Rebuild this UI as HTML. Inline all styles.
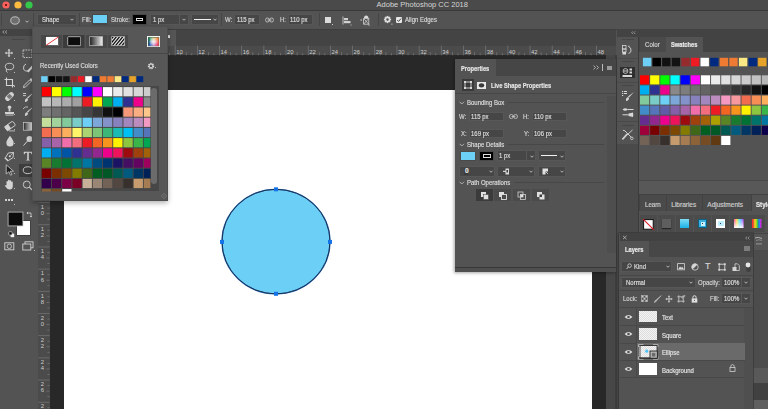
<!DOCTYPE html><html><head><meta charset="utf-8"><style>
html,body{margin:0;padding:0;width:768px;height:409px;overflow:hidden;background:#535353;font-family:"Liberation Sans", sans-serif}
div{position:absolute;box-sizing:border-box}
.t{white-space:nowrap;-webkit-text-stroke:0.18px currentColor}
</style></head><body><div style="left:0px;top:0px;width:768px;height:9.6px;background:#4a4a4a"></div><div style="left:0px;top:9.6px;width:768px;height:1.2px;background:#393939"></div><svg style="position:absolute;left:2.4000000000000004px;top:0.7px;" width="8" height="8" viewBox="0 0 8 8"><circle cx="4" cy="4" r="3.6" fill="#fc615d"/></svg><svg style="position:absolute;left:13.8px;top:0.7px;" width="8" height="8" viewBox="0 0 8 8"><circle cx="4" cy="4" r="3.6" fill="#fdbc40"/></svg><svg style="position:absolute;left:25px;top:0.7px;" width="8" height="8" viewBox="0 0 8 8"><circle cx="4" cy="4" r="3.6" fill="#34c84a"/></svg><svg style="position:absolute;left:4.4px;top:2.7px;" width="4" height="4" viewBox="0 0 4 4"><circle cx="2" cy="2" r="1" fill="#4d0000"/></svg><div class="t" style="left:376.6px;top:-0.28px;line-height:9.75px;font-size:7.5px;color:#d6d6d6;font-weight:normal;-webkit-text-stroke:0">Adobe Photoshop CC 2018</div><div style="left:0px;top:11px;width:768px;height:18px;background:#535353"></div><div style="left:0px;top:28.5px;width:768px;height:1px;background:#3e3e3e"></div><div style="left:1px;top:13px;width:1px;height:13px;background:#464646"></div><div style="left:33px;top:13px;width:1px;height:13px;background:#464646"></div><div style="left:79px;top:13px;width:1px;height:13px;background:#464646"></div><div style="left:221px;top:13px;width:1px;height:13px;background:#464646"></div><div style="left:318.5px;top:13px;width:1px;height:13px;background:#464646"></div><div style="left:377.5px;top:13px;width:1px;height:13px;background:#464646"></div><svg style="position:absolute;left:10px;top:15.5px;" width="10" height="9" viewBox="0 0 10 9"><ellipse cx="5" cy="4.5" rx="4.3" ry="3.7" fill="#6e6e6e" stroke="#d8d8d8" stroke-width="0.8"/></svg><svg style="position:absolute;left:24.5px;top:19.5px;" width="4" height="3" viewBox="0 0 4 3"><polyline points="0.5,0.7 2.0,2.3 3.5,0.7" fill="none" stroke="#cfcfcf" stroke-width="0.8"/></svg><div style="left:38px;top:14.8px;width:38px;height:9px;background:#464646;box-shadow:0 0 0 0.7px #5a5a5a"></div><div class="t" style="left:41.7px;top:15px;line-height:10px;font-size:6.5px;color:#dcdcdc;font-weight:normal;transform:scaleX(0.92);transform-origin:0 0;">Shape</div><svg style="position:absolute;left:69.5px;top:18.2px;" width="4" height="3" viewBox="0 0 4 3"><polyline points="0.5,0.7 2.0,2.3 3.5,0.7" fill="none" stroke="#cfcfcf" stroke-width="0.8"/></svg><div class="t" style="left:82px;top:15px;line-height:10px;font-size:6.5px;color:#d2d2d2;font-weight:normal;transform:scaleX(0.92);transform-origin:0 0;">Fill:</div><div style="left:92px;top:14px;width:16px;height:10.5px;background:#484848"></div><div style="left:93.2px;top:15.1px;width:13.6px;height:8.4px;background:#6ccff6"></div><div class="t" style="left:110.6px;top:15px;line-height:10px;font-size:6.5px;color:#d2d2d2;font-weight:normal;transform:scaleX(0.92);transform-origin:0 0;">Stroke:</div><div style="left:132px;top:14px;width:15px;height:10.5px;background:#484848"></div><div style="left:132.8px;top:15px;width:13.4px;height:8.6px;background:#000"></div><div style="left:135.6px;top:17.6px;width:7.6px;height:3.2px;box-shadow:inset 0 0 0 0.9px #e0e0e0"></div><div style="left:151px;top:14.8px;width:27.8px;height:9px;background:#464646;box-shadow:0 0 0 0.7px #5a5a5a"></div><div class="t" style="left:153px;top:15px;line-height:10px;font-size:6.5px;color:#dcdcdc;font-weight:normal;transform:scaleX(0.92);transform-origin:0 0;">1 px</div><div style="left:180px;top:14.8px;width:8px;height:9px;background:#464646;box-shadow:0 0 0 0.7px #5a5a5a"></div><svg style="position:absolute;left:182px;top:18.2px;" width="4" height="3" viewBox="0 0 4 3"><polyline points="0.5,0.7 2.0,2.3 3.5,0.7" fill="none" stroke="#cfcfcf" stroke-width="0.8"/></svg><div style="left:192px;top:14.8px;width:26px;height:9px;background:#464646;box-shadow:0 0 0 0.7px #5a5a5a"></div><div style="left:193.5px;top:18.6px;width:17px;height:1.5px;background:#f0f0f0"></div><svg style="position:absolute;left:213px;top:18.2px;" width="4" height="3" viewBox="0 0 4 3"><polyline points="0.5,0.7 2.0,2.3 3.5,0.7" fill="none" stroke="#cfcfcf" stroke-width="0.8"/></svg><div class="t" style="left:225px;top:15px;line-height:10px;font-size:6.5px;color:#d2d2d2;font-weight:normal;transform:scaleX(0.92);transform-origin:0 0;">W:</div><div style="left:234.8px;top:14.8px;width:24px;height:9px;background:#464646;box-shadow:0 0 0 0.7px #5a5a5a"></div><div class="t" style="left:236.7px;top:15px;line-height:10px;font-size:6.5px;color:#dcdcdc;font-weight:normal;transform:scaleX(0.92);transform-origin:0 0;">115 px</div><svg style="position:absolute;left:264.5px;top:16.5px;" width="9" height="6" viewBox="0 0 9 6"><rect x="0.6" y="1" width="3.6" height="4" rx="1.6" fill="none" stroke="#d0d0d0" stroke-width="0.8"/><rect x="4.8" y="1" width="3.6" height="4" rx="1.6" fill="none" stroke="#d0d0d0" stroke-width="0.8"/><line x1="2.5" y1="3" x2="6.5" y2="3" stroke="#d0d0d0" stroke-width="0.8"/></svg><div class="t" style="left:279.9px;top:15px;line-height:10px;font-size:6.5px;color:#d2d2d2;font-weight:normal;transform:scaleX(0.92);transform-origin:0 0;">H:</div><div style="left:288.5px;top:14.8px;width:23.5px;height:9px;background:#464646;box-shadow:0 0 0 0.7px #5a5a5a"></div><div class="t" style="left:290px;top:15px;line-height:10px;font-size:6.5px;color:#dcdcdc;font-weight:normal;transform:scaleX(0.92);transform-origin:0 0;">110 px</div><div style="left:325px;top:16.8px;width:5.8px;height:5.8px;background:#dcdcdc"></div><div style="left:331.5px;top:23.5px;width:1px;height:1px;background:#ccc"></div><svg style="position:absolute;left:341.5px;top:15.5px;" width="10" height="10" viewBox="0 0 10 10"><rect x="0.5" y="0.5" width="1" height="8" fill="#bbb"/><rect x="2" y="2" width="4" height="2.2" fill="#d0d0d0"/><rect x="2" y="5" width="6.5" height="2.2" fill="#d0d0d0"/><rect x="8.5" y="8.5" width="1" height="1" fill="#ccc"/></svg><svg style="position:absolute;left:359px;top:14.5px;" width="12" height="11" viewBox="0 0 12 11"><path d="M5 3.3 Q5 0.5 7.2 0.5 Q9.4 0.5 9.4 3.3 Z" fill="#d8d8d8"/><rect x="4.6" y="3.6" width="5.2" height="5.6" fill="none" stroke="#d0d0d0" stroke-width="0.8"/><path d="M4.8 3.8 L9.6 9 M9.6 3.8 L4.8 9" stroke="#d0d0d0" stroke-width="0.8"/><path d="M1 5 L2.6 4 V6 Z" fill="#d0d0d0"/><rect x="9.5" y="9.6" width="1.2" height="1" fill="#ccc"/></svg><svg style="position:absolute;left:382.5px;top:15.4px;" width="10" height="10" viewBox="0 0 10 10"><circle cx="4.5" cy="4.5" r="2.9" fill="#dcdcdc"/><rect x="3.75" y="0.9" width="1.5" height="1.6" fill="#dcdcdc" transform="rotate(0 4.5 4.5)"/><rect x="3.75" y="0.9" width="1.5" height="1.6" fill="#dcdcdc" transform="rotate(45 4.5 4.5)"/><rect x="3.75" y="0.9" width="1.5" height="1.6" fill="#dcdcdc" transform="rotate(90 4.5 4.5)"/><rect x="3.75" y="0.9" width="1.5" height="1.6" fill="#dcdcdc" transform="rotate(135 4.5 4.5)"/><rect x="3.75" y="0.9" width="1.5" height="1.6" fill="#dcdcdc" transform="rotate(180 4.5 4.5)"/><rect x="3.75" y="0.9" width="1.5" height="1.6" fill="#dcdcdc" transform="rotate(225 4.5 4.5)"/><rect x="3.75" y="0.9" width="1.5" height="1.6" fill="#dcdcdc" transform="rotate(270 4.5 4.5)"/><rect x="3.75" y="0.9" width="1.5" height="1.6" fill="#dcdcdc" transform="rotate(315 4.5 4.5)"/><circle cx="4.5" cy="4.5" r="1.2" fill="#535353"/><rect x="8.3" y="8.6" width="1.2" height="1" fill="#ccc"/></svg><div style="left:396px;top:16.8px;width:6.2px;height:6.2px;background:#e6e6e6;border-radius:1px"></div><svg style="position:absolute;left:396px;top:16.8px;" width="6.2" height="6.2" viewBox="0 0 6.2 6.2"><polyline points="1.3,3.1 2.6,4.4 5,1.6" fill="none" stroke="#333" stroke-width="0.9"/></svg><div class="t" style="left:405px;top:15px;line-height:10px;font-size:6.5px;color:#d8d8d8;font-weight:normal;transform:scaleX(0.92);transform-origin:0 0;">Align Edges</div><div style="left:38px;top:29.5px;width:578px;height:16.1px;background:#444444"></div><div style="left:38px;top:29.5px;width:138px;height:16.1px;background:#555555"></div><div style="left:167.8px;top:35.3px;width:1.8px;height:2.6px;background:#e8e8e8;border-radius:0.6px"></div><div style="left:38px;top:45.6px;width:578px;height:9.8px;background:#4b4b4b"></div><div style="left:38px;top:55.3px;width:12px;height:354px;background:#4b4b4b"></div><div style="left:50px;top:55.3px;width:556px;height:354px;background:#282828"></div><div style="left:606px;top:55.3px;width:10px;height:354px;background:#474747"></div><div style="left:615px;top:55.3px;width:2px;height:354px;background:#3c3c3c"></div><svg style="position:absolute;left:0px;top:0px;" width="768" height="409" viewBox="0 0 768 409"><rect x="52.76" y="52.10" width="0.8" height="3.2" fill="#727272"/><rect x="58.30" y="53.10" width="0.8" height="2.2" fill="#727272"/><rect x="63.85" y="45.60" width="0.8" height="9.7" fill="#727272"/><rect x="69.39" y="53.10" width="0.8" height="2.2" fill="#727272"/><rect x="74.94" y="52.10" width="0.8" height="3.2" fill="#727272"/><rect x="80.48" y="53.10" width="0.8" height="2.2" fill="#727272"/><text x="65.25" y="53.8" font-size="5.9" fill="#cdcdcd" font-family="Liberation Sans">0</text><rect x="86.03" y="45.60" width="0.8" height="9.7" fill="#727272"/><rect x="91.58" y="53.10" width="0.8" height="2.2" fill="#727272"/><rect x="97.12" y="52.10" width="0.8" height="3.2" fill="#727272"/><rect x="102.66" y="53.10" width="0.8" height="2.2" fill="#727272"/><text x="87.43" y="53.8" font-size="5.9" fill="#cdcdcd" font-family="Liberation Sans">2</text><rect x="108.21" y="45.60" width="0.8" height="9.7" fill="#727272"/><rect x="113.76" y="53.10" width="0.8" height="2.2" fill="#727272"/><rect x="119.30" y="52.10" width="0.8" height="3.2" fill="#727272"/><rect x="124.84" y="53.10" width="0.8" height="2.2" fill="#727272"/><text x="109.61" y="53.8" font-size="5.9" fill="#cdcdcd" font-family="Liberation Sans">4</text><rect x="130.39" y="45.60" width="0.8" height="9.7" fill="#727272"/><rect x="135.93" y="53.10" width="0.8" height="2.2" fill="#727272"/><rect x="141.48" y="52.10" width="0.8" height="3.2" fill="#727272"/><rect x="147.02" y="53.10" width="0.8" height="2.2" fill="#727272"/><text x="131.79" y="53.8" font-size="5.9" fill="#cdcdcd" font-family="Liberation Sans">6</text><rect x="152.57" y="45.60" width="0.8" height="9.7" fill="#727272"/><rect x="158.11" y="53.10" width="0.8" height="2.2" fill="#727272"/><rect x="163.66" y="52.10" width="0.8" height="3.2" fill="#727272"/><rect x="169.20" y="53.10" width="0.8" height="2.2" fill="#727272"/><text x="153.97" y="53.8" font-size="5.9" fill="#cdcdcd" font-family="Liberation Sans">8</text><rect x="174.75" y="45.60" width="0.8" height="9.7" fill="#727272"/><rect x="180.29" y="53.10" width="0.8" height="2.2" fill="#727272"/><rect x="185.84" y="52.10" width="0.8" height="3.2" fill="#727272"/><rect x="191.38" y="53.10" width="0.8" height="2.2" fill="#727272"/><text x="176.15" y="53.8" font-size="5.9" fill="#cdcdcd" font-family="Liberation Sans">10</text><rect x="196.93" y="45.60" width="0.8" height="9.7" fill="#727272"/><rect x="202.47" y="53.10" width="0.8" height="2.2" fill="#727272"/><rect x="208.02" y="52.10" width="0.8" height="3.2" fill="#727272"/><rect x="213.56" y="53.10" width="0.8" height="2.2" fill="#727272"/><text x="198.33" y="53.8" font-size="5.9" fill="#cdcdcd" font-family="Liberation Sans">12</text><rect x="219.11" y="45.60" width="0.8" height="9.7" fill="#727272"/><rect x="224.65" y="53.10" width="0.8" height="2.2" fill="#727272"/><rect x="230.20" y="52.10" width="0.8" height="3.2" fill="#727272"/><rect x="235.74" y="53.10" width="0.8" height="2.2" fill="#727272"/><text x="220.51" y="53.8" font-size="5.9" fill="#cdcdcd" font-family="Liberation Sans">14</text><rect x="241.29" y="45.60" width="0.8" height="9.7" fill="#727272"/><rect x="246.83" y="53.10" width="0.8" height="2.2" fill="#727272"/><rect x="252.38" y="52.10" width="0.8" height="3.2" fill="#727272"/><rect x="257.93" y="53.10" width="0.8" height="2.2" fill="#727272"/><text x="242.69" y="53.8" font-size="5.9" fill="#cdcdcd" font-family="Liberation Sans">16</text><rect x="263.47" y="45.60" width="0.8" height="9.7" fill="#727272"/><rect x="269.02" y="53.10" width="0.8" height="2.2" fill="#727272"/><rect x="274.56" y="52.10" width="0.8" height="3.2" fill="#727272"/><rect x="280.11" y="53.10" width="0.8" height="2.2" fill="#727272"/><text x="264.87" y="53.8" font-size="5.9" fill="#cdcdcd" font-family="Liberation Sans">18</text><rect x="285.65" y="45.60" width="0.8" height="9.7" fill="#727272"/><rect x="291.20" y="53.10" width="0.8" height="2.2" fill="#727272"/><rect x="296.74" y="52.10" width="0.8" height="3.2" fill="#727272"/><rect x="302.29" y="53.10" width="0.8" height="2.2" fill="#727272"/><text x="287.05" y="53.8" font-size="5.9" fill="#cdcdcd" font-family="Liberation Sans">20</text><rect x="307.83" y="45.60" width="0.8" height="9.7" fill="#727272"/><rect x="313.38" y="53.10" width="0.8" height="2.2" fill="#727272"/><rect x="318.92" y="52.10" width="0.8" height="3.2" fill="#727272"/><rect x="324.46" y="53.10" width="0.8" height="2.2" fill="#727272"/><text x="309.23" y="53.8" font-size="5.9" fill="#cdcdcd" font-family="Liberation Sans">22</text><rect x="330.01" y="45.60" width="0.8" height="9.7" fill="#727272"/><rect x="335.56" y="53.10" width="0.8" height="2.2" fill="#727272"/><rect x="341.10" y="52.10" width="0.8" height="3.2" fill="#727272"/><rect x="346.64" y="53.10" width="0.8" height="2.2" fill="#727272"/><text x="331.41" y="53.8" font-size="5.9" fill="#cdcdcd" font-family="Liberation Sans">24</text><rect x="352.19" y="45.60" width="0.8" height="9.7" fill="#727272"/><rect x="357.74" y="53.10" width="0.8" height="2.2" fill="#727272"/><rect x="363.28" y="52.10" width="0.8" height="3.2" fill="#727272"/><rect x="368.82" y="53.10" width="0.8" height="2.2" fill="#727272"/><text x="353.59" y="53.8" font-size="5.9" fill="#cdcdcd" font-family="Liberation Sans">26</text><rect x="374.37" y="45.60" width="0.8" height="9.7" fill="#727272"/><rect x="379.92" y="53.10" width="0.8" height="2.2" fill="#727272"/><rect x="385.46" y="52.10" width="0.8" height="3.2" fill="#727272"/><rect x="391.00" y="53.10" width="0.8" height="2.2" fill="#727272"/><text x="375.77" y="53.8" font-size="5.9" fill="#cdcdcd" font-family="Liberation Sans">28</text><rect x="396.55" y="45.60" width="0.8" height="9.7" fill="#727272"/><rect x="402.10" y="53.10" width="0.8" height="2.2" fill="#727272"/><rect x="407.64" y="52.10" width="0.8" height="3.2" fill="#727272"/><rect x="413.19" y="53.10" width="0.8" height="2.2" fill="#727272"/><text x="397.95" y="53.8" font-size="5.9" fill="#cdcdcd" font-family="Liberation Sans">30</text><rect x="418.73" y="45.60" width="0.8" height="9.7" fill="#727272"/><rect x="424.28" y="53.10" width="0.8" height="2.2" fill="#727272"/><rect x="429.82" y="52.10" width="0.8" height="3.2" fill="#727272"/><rect x="435.37" y="53.10" width="0.8" height="2.2" fill="#727272"/><text x="420.13" y="53.8" font-size="5.9" fill="#cdcdcd" font-family="Liberation Sans">32</text><rect x="440.91" y="45.60" width="0.8" height="9.7" fill="#727272"/><rect x="446.46" y="53.10" width="0.8" height="2.2" fill="#727272"/><rect x="452.00" y="52.10" width="0.8" height="3.2" fill="#727272"/><rect x="457.55" y="53.10" width="0.8" height="2.2" fill="#727272"/><text x="442.31" y="53.8" font-size="5.9" fill="#cdcdcd" font-family="Liberation Sans">34</text><rect x="463.09" y="45.60" width="0.8" height="9.7" fill="#727272"/><rect x="468.64" y="53.10" width="0.8" height="2.2" fill="#727272"/><rect x="474.18" y="52.10" width="0.8" height="3.2" fill="#727272"/><rect x="479.73" y="53.10" width="0.8" height="2.2" fill="#727272"/><text x="464.49" y="53.8" font-size="5.9" fill="#cdcdcd" font-family="Liberation Sans">36</text><rect x="485.27" y="45.60" width="0.8" height="9.7" fill="#727272"/><rect x="490.82" y="53.10" width="0.8" height="2.2" fill="#727272"/><rect x="496.36" y="52.10" width="0.8" height="3.2" fill="#727272"/><rect x="501.91" y="53.10" width="0.8" height="2.2" fill="#727272"/><text x="486.67" y="53.8" font-size="5.9" fill="#cdcdcd" font-family="Liberation Sans">38</text><rect x="507.45" y="45.60" width="0.8" height="9.7" fill="#727272"/><rect x="513.00" y="53.10" width="0.8" height="2.2" fill="#727272"/><rect x="518.54" y="52.10" width="0.8" height="3.2" fill="#727272"/><rect x="524.09" y="53.10" width="0.8" height="2.2" fill="#727272"/><text x="508.85" y="53.8" font-size="5.9" fill="#cdcdcd" font-family="Liberation Sans">40</text><rect x="529.63" y="45.60" width="0.8" height="9.7" fill="#727272"/><rect x="535.17" y="53.10" width="0.8" height="2.2" fill="#727272"/><rect x="540.72" y="52.10" width="0.8" height="3.2" fill="#727272"/><rect x="546.26" y="53.10" width="0.8" height="2.2" fill="#727272"/><text x="531.03" y="53.8" font-size="5.9" fill="#cdcdcd" font-family="Liberation Sans">42</text><rect x="551.81" y="45.60" width="0.8" height="9.7" fill="#727272"/><rect x="557.35" y="53.10" width="0.8" height="2.2" fill="#727272"/><rect x="562.90" y="52.10" width="0.8" height="3.2" fill="#727272"/><rect x="568.44" y="53.10" width="0.8" height="2.2" fill="#727272"/><text x="553.21" y="53.8" font-size="5.9" fill="#cdcdcd" font-family="Liberation Sans">44</text><rect x="573.99" y="45.60" width="0.8" height="9.7" fill="#727272"/><rect x="579.53" y="53.10" width="0.8" height="2.2" fill="#727272"/><rect x="585.08" y="52.10" width="0.8" height="3.2" fill="#727272"/><rect x="590.62" y="53.10" width="0.8" height="2.2" fill="#727272"/><text x="575.39" y="53.8" font-size="5.9" fill="#cdcdcd" font-family="Liberation Sans">46</text><rect x="596.17" y="45.60" width="0.8" height="9.7" fill="#727272"/><rect x="601.71" y="53.10" width="0.8" height="2.2" fill="#727272"/><text x="597.57" y="53.8" font-size="5.9" fill="#cdcdcd" font-family="Liberation Sans">48</text><rect x="46.40" y="58.03" width="3.2" height="0.8" fill="#727272"/><rect x="47.40" y="63.57" width="2.2" height="0.8" fill="#727272"/><rect x="38.3" y="69.12" width="11.3" height="0.8" fill="#727272"/><rect x="47.40" y="74.67" width="2.2" height="0.8" fill="#727272"/><rect x="46.40" y="80.21" width="3.2" height="0.8" fill="#727272"/><rect x="47.40" y="85.75" width="2.2" height="0.8" fill="#727272"/><text x="40.8" y="75.72" font-size="5.9" fill="#cdcdcd" font-family="Liberation Sans">-</text><text x="40.8" y="81.92" font-size="5.9" fill="#cdcdcd" font-family="Liberation Sans">2</text><rect x="38.3" y="91.30" width="11.3" height="0.8" fill="#727272"/><rect x="47.40" y="96.84" width="2.2" height="0.8" fill="#727272"/><rect x="46.40" y="102.39" width="3.2" height="0.8" fill="#727272"/><rect x="47.40" y="107.94" width="2.2" height="0.8" fill="#727272"/><text x="40.8" y="97.90" font-size="5.9" fill="#cdcdcd" font-family="Liberation Sans">0</text><rect x="38.3" y="113.48" width="11.3" height="0.8" fill="#727272"/><rect x="47.40" y="119.02" width="2.2" height="0.8" fill="#727272"/><rect x="46.40" y="124.57" width="3.2" height="0.8" fill="#727272"/><rect x="47.40" y="130.11" width="2.2" height="0.8" fill="#727272"/><text x="40.8" y="120.08" font-size="5.9" fill="#cdcdcd" font-family="Liberation Sans">2</text><rect x="38.3" y="135.66" width="11.3" height="0.8" fill="#727272"/><rect x="47.40" y="141.20" width="2.2" height="0.8" fill="#727272"/><rect x="46.40" y="146.75" width="3.2" height="0.8" fill="#727272"/><rect x="47.40" y="152.29" width="2.2" height="0.8" fill="#727272"/><text x="40.8" y="142.26" font-size="5.9" fill="#cdcdcd" font-family="Liberation Sans">4</text><rect x="38.3" y="157.84" width="11.3" height="0.8" fill="#727272"/><rect x="47.40" y="163.38" width="2.2" height="0.8" fill="#727272"/><rect x="46.40" y="168.93" width="3.2" height="0.8" fill="#727272"/><rect x="47.40" y="174.47" width="2.2" height="0.8" fill="#727272"/><text x="40.8" y="164.44" font-size="5.9" fill="#cdcdcd" font-family="Liberation Sans">6</text><rect x="38.3" y="180.02" width="11.3" height="0.8" fill="#727272"/><rect x="47.40" y="185.56" width="2.2" height="0.8" fill="#727272"/><rect x="46.40" y="191.11" width="3.2" height="0.8" fill="#727272"/><rect x="47.40" y="196.65" width="2.2" height="0.8" fill="#727272"/><text x="40.8" y="186.62" font-size="5.9" fill="#cdcdcd" font-family="Liberation Sans">8</text><rect x="38.3" y="202.20" width="11.3" height="0.8" fill="#727272"/><rect x="47.40" y="207.74" width="2.2" height="0.8" fill="#727272"/><rect x="46.40" y="213.29" width="3.2" height="0.8" fill="#727272"/><rect x="47.40" y="218.83" width="2.2" height="0.8" fill="#727272"/><text x="40.8" y="208.80" font-size="5.9" fill="#cdcdcd" font-family="Liberation Sans">1</text><text x="40.8" y="215.00" font-size="5.9" fill="#cdcdcd" font-family="Liberation Sans">0</text><rect x="38.3" y="224.38" width="11.3" height="0.8" fill="#727272"/><rect x="47.40" y="229.92" width="2.2" height="0.8" fill="#727272"/><rect x="46.40" y="235.47" width="3.2" height="0.8" fill="#727272"/><rect x="47.40" y="241.01" width="2.2" height="0.8" fill="#727272"/><text x="40.8" y="230.98" font-size="5.9" fill="#cdcdcd" font-family="Liberation Sans">1</text><text x="40.8" y="237.18" font-size="5.9" fill="#cdcdcd" font-family="Liberation Sans">2</text><rect x="38.3" y="246.56" width="11.3" height="0.8" fill="#727272"/><rect x="47.40" y="252.10" width="2.2" height="0.8" fill="#727272"/><rect x="46.40" y="257.65" width="3.2" height="0.8" fill="#727272"/><rect x="47.40" y="263.19" width="2.2" height="0.8" fill="#727272"/><text x="40.8" y="253.16" font-size="5.9" fill="#cdcdcd" font-family="Liberation Sans">1</text><text x="40.8" y="259.36" font-size="5.9" fill="#cdcdcd" font-family="Liberation Sans">4</text><rect x="38.3" y="268.74" width="11.3" height="0.8" fill="#727272"/><rect x="47.40" y="274.29" width="2.2" height="0.8" fill="#727272"/><rect x="46.40" y="279.83" width="3.2" height="0.8" fill="#727272"/><rect x="47.40" y="285.38" width="2.2" height="0.8" fill="#727272"/><text x="40.8" y="275.34" font-size="5.9" fill="#cdcdcd" font-family="Liberation Sans">1</text><text x="40.8" y="281.54" font-size="5.9" fill="#cdcdcd" font-family="Liberation Sans">6</text><rect x="38.3" y="290.92" width="11.3" height="0.8" fill="#727272"/><rect x="47.40" y="296.47" width="2.2" height="0.8" fill="#727272"/><rect x="46.40" y="302.01" width="3.2" height="0.8" fill="#727272"/><rect x="47.40" y="307.56" width="2.2" height="0.8" fill="#727272"/><text x="40.8" y="297.52" font-size="5.9" fill="#cdcdcd" font-family="Liberation Sans">1</text><text x="40.8" y="303.72" font-size="5.9" fill="#cdcdcd" font-family="Liberation Sans">8</text><rect x="38.3" y="313.10" width="11.3" height="0.8" fill="#727272"/><rect x="47.40" y="318.65" width="2.2" height="0.8" fill="#727272"/><rect x="46.40" y="324.19" width="3.2" height="0.8" fill="#727272"/><rect x="47.40" y="329.74" width="2.2" height="0.8" fill="#727272"/><text x="40.8" y="319.70" font-size="5.9" fill="#cdcdcd" font-family="Liberation Sans">2</text><text x="40.8" y="325.90" font-size="5.9" fill="#cdcdcd" font-family="Liberation Sans">0</text><rect x="38.3" y="335.28" width="11.3" height="0.8" fill="#727272"/><rect x="47.40" y="340.82" width="2.2" height="0.8" fill="#727272"/><rect x="46.40" y="346.37" width="3.2" height="0.8" fill="#727272"/><rect x="47.40" y="351.91" width="2.2" height="0.8" fill="#727272"/><text x="40.8" y="341.88" font-size="5.9" fill="#cdcdcd" font-family="Liberation Sans">2</text><text x="40.8" y="348.08" font-size="5.9" fill="#cdcdcd" font-family="Liberation Sans">2</text><rect x="38.3" y="357.46" width="11.3" height="0.8" fill="#727272"/><rect x="47.40" y="363.00" width="2.2" height="0.8" fill="#727272"/><rect x="46.40" y="368.55" width="3.2" height="0.8" fill="#727272"/><rect x="47.40" y="374.09" width="2.2" height="0.8" fill="#727272"/><text x="40.8" y="364.06" font-size="5.9" fill="#cdcdcd" font-family="Liberation Sans">2</text><text x="40.8" y="370.26" font-size="5.9" fill="#cdcdcd" font-family="Liberation Sans">4</text><rect x="38.3" y="379.64" width="11.3" height="0.8" fill="#727272"/><rect x="47.40" y="385.19" width="2.2" height="0.8" fill="#727272"/><rect x="46.40" y="390.73" width="3.2" height="0.8" fill="#727272"/><rect x="47.40" y="396.27" width="2.2" height="0.8" fill="#727272"/><text x="40.8" y="386.24" font-size="5.9" fill="#cdcdcd" font-family="Liberation Sans">2</text><text x="40.8" y="392.44" font-size="5.9" fill="#cdcdcd" font-family="Liberation Sans">6</text><rect x="38.3" y="401.82" width="11.3" height="0.8" fill="#727272"/><rect x="47.40" y="407.37" width="2.2" height="0.8" fill="#727272"/><text x="40.8" y="408.42" font-size="5.9" fill="#cdcdcd" font-family="Liberation Sans">2</text><text x="40.8" y="414.62" font-size="5.9" fill="#cdcdcd" font-family="Liberation Sans">8</text></svg><div style="left:64px;top:90.3px;width:528.2px;height:319px;background:#ffffff"></div><svg style="position:absolute;left:215px;top:181px;" width="122" height="122" viewBox="0 0 122 122"><ellipse cx="61" cy="60.6" rx="54" ry="52.3" fill="#6ccff6"/><ellipse cx="61" cy="60.6" rx="54" ry="52.3" fill="none" stroke="#2a6cc0" stroke-width="1.3"/><ellipse cx="61" cy="60.6" rx="54" ry="52.3" fill="none" stroke="#172a44" stroke-width="0.9"/><rect x="59" y="6.3" width="4" height="4" fill="#1473e6"/><rect x="59" y="110.8" width="4" height="4" fill="#1473e6"/><rect x="5" y="58.9" width="4" height="4" fill="#1473e6"/><rect x="113" y="58.9" width="4" height="4" fill="#1473e6"/></svg><div style="left:0px;top:29px;width:38.3px;height:380px;background:#535353"></div><div style="left:0px;top:28.6px;width:38.3px;height:7px;background:#434343"></div><svg style="position:absolute;left:1.5px;top:30.3px;" width="6" height="4" viewBox="0 0 6 4"><polyline points="2.4,0.5 0.7,2 2.4,3.5" fill="none" stroke="#c4c4c4" stroke-width="0.7"/><polyline points="5.0,0.5 3.3,2 5.0,3.5" fill="none" stroke="#c4c4c4" stroke-width="0.7"/></svg><div style="left:11.5px;top:38.5px;width:13px;height:1px;background:#464646"></div><svg style="position:absolute;left:4px;top:48px;" width="11" height="11" viewBox="0 0 11 11"><path d="M5 0.8 L6.5 2.6 H5.6 V4.4 H7.4 V3.5 L9.2 5 L7.4 6.5 V5.6 H5.6 V7.4 H6.5 L5 9.2 L3.5 7.4 H4.4 V5.6 H2.6 V6.5 L0.8 5 L2.6 3.5 V4.4 H4.4 V2.6 H3.5 Z" fill="#d2d2d2"/></svg><div style="left:14px;top:58px;width:1px;height:1px;background:#bbb"></div><svg style="position:absolute;left:22px;top:48.5px;" width="11" height="10" viewBox="0 0 11 10"><rect x="1" y="1" width="9" height="7.5" fill="none" stroke="#d2d2d2" stroke-width="0.9" stroke-dasharray="1.6 1"/></svg><svg style="position:absolute;left:4px;top:62px;" width="11" height="12" viewBox="0 0 11 12"><ellipse cx="5.5" cy="4.5" rx="4.2" ry="3.2" fill="none" stroke="#d2d2d2" stroke-width="0.9"/><path d="M2.5 7 Q1.5 9.5 3.5 10.5" fill="none" stroke="#d2d2d2" stroke-width="0.9"/></svg><div style="left:14px;top:72px;width:1px;height:1px;background:#bbb"></div><svg style="position:absolute;left:22px;top:62px;" width="12" height="12" viewBox="0 0 12 12"><path d="M4 2 Q1 3 1.5 7 Q3 10 6 9" fill="none" stroke="#d2d2d2" stroke-width="0.9"/><path d="M5 9 L10 3.5 L11.5 5 L6.5 10.5 Z" fill="#d2d2d2"/></svg><svg style="position:absolute;left:4px;top:77px;" width="11" height="11" viewBox="0 0 11 11"><path d="M2.5 0.5 V8.5 H10.5 M0.5 2.5 H8.5 V10.5" fill="none" stroke="#d2d2d2" stroke-width="1.1"/></svg><div style="left:14px;top:86px;width:1px;height:1px;background:#bbb"></div><svg style="position:absolute;left:22px;top:76.5px;" width="12" height="12" viewBox="0 0 12 12"><path d="M9 1 L11 3 L9.5 4.5 L7.5 2.5 Z" fill="#d2d2d2"/><path d="M7.5 3 L9 4.5 L3.5 10 L1.5 10.5 L2 8.5 Z" fill="none" stroke="#d2d2d2" stroke-width="0.9"/></svg><svg style="position:absolute;left:4px;top:90.5px;" width="11" height="11" viewBox="0 0 11 11"><g transform="rotate(-45 5.5 5.5)"><rect x="0.5" y="3" width="10" height="5" rx="2" fill="#d2d2d2"/><rect x="3.5" y="3.5" width="4" height="4" fill="#777"/></g></svg><div style="left:14px;top:100px;width:1px;height:1px;background:#bbb"></div><svg style="position:absolute;left:21.5px;top:90.5px;" width="13" height="12" viewBox="0 0 13 12"><path d="M12 1 L6 7.5 L5 6.5 Z" fill="#d2d2d2"/><path d="M5 7 Q2.5 8 3 11 Q6 10.5 6 8 Z" fill="#d2d2d2"/><rect x="1" y="2" width="3" height="0.9" fill="#d2d2d2"/><rect x="1" y="4.2" width="3" height="0.9" fill="#d2d2d2"/></svg><svg style="position:absolute;left:4px;top:104.5px;" width="11" height="11" viewBox="0 0 11 11"><circle cx="5.5" cy="2.2" r="1.8" fill="#d2d2d2"/><rect x="4.6" y="3.5" width="1.8" height="3" fill="#d2d2d2"/><path d="M1 7 H10 V9 H1 Z" fill="#d2d2d2"/><rect x="1.5" y="9.6" width="8" height="0.9" fill="#d2d2d2"/></svg><div style="left:14px;top:114px;width:1px;height:1px;background:#bbb"></div><svg style="position:absolute;left:21.5px;top:104.5px;" width="13" height="12" viewBox="0 0 13 12"><path d="M12 1 L6 7.5 L5 6.5 Z" fill="#d2d2d2"/><path d="M5 7 Q2.5 8 3 11 Q6 10.5 6 8 Z" fill="#d2d2d2"/><path d="M1 4 Q3 1 6 2" fill="none" stroke="#d2d2d2" stroke-width="0.8"/></svg><svg style="position:absolute;left:4px;top:121px;" width="12" height="11" viewBox="0 0 12 11"><g transform="rotate(-35 6 5)"><rect x="1" y="2.5" width="10" height="5" rx="0.8" fill="none" stroke="#d2d2d2" stroke-width="0.9"/><rect x="1" y="2.5" width="4.5" height="5" fill="#d2d2d2"/></g><rect x="5" y="9.5" width="6" height="0.8" fill="#d2d2d2"/></svg><div style="left:14px;top:129px;width:1px;height:1px;background:#bbb"></div><svg style="position:absolute;left:22.5px;top:121.8px;" width="11" height="10" viewBox="0 0 11 10"><defs><linearGradient id="gr1"><stop offset="0" stop-color="#2a2a2a"/><stop offset="1" stop-color="#eee"/></linearGradient></defs><rect x="0.6" y="0.6" width="8.8" height="7.6" fill="url(#gr1)" stroke="#ccc" stroke-width="0.7"/></svg><svg style="position:absolute;left:4.5px;top:134.5px;" width="10" height="12" viewBox="0 0 10 12"><path d="M5 0.8 Q9 6 8.6 8 A3.6 3.6 0 0 1 1.4 8 Q1 6 5 0.8 Z" fill="#d2d2d2"/></svg><div style="left:14px;top:143px;width:1px;height:1px;background:#bbb"></div><svg style="position:absolute;left:22px;top:134.5px;" width="12" height="12" viewBox="0 0 12 12"><circle cx="7.5" cy="4" r="3" fill="#d2d2d2"/><line x1="5.5" y1="6" x2="1.5" y2="10.5" stroke="#d2d2d2" stroke-width="1"/></svg><svg style="position:absolute;left:3.5px;top:149.5px;" width="12" height="12" viewBox="0 0 12 12"><g transform="rotate(45 6 6)"><path d="M6 1 L9.3 5 L8 10.5 H4 L2.7 5 Z" fill="none" stroke="#d2d2d2" stroke-width="0.9"/><circle cx="6" cy="6.3" r="1" fill="#d2d2d2"/><line x1="6" y1="1" x2="6" y2="5.3" stroke="#d2d2d2" stroke-width="0.7"/><rect x="3.6" y="10.3" width="4.8" height="1.2" fill="#d2d2d2"/></g></svg><div style="left:14px;top:158px;width:1px;height:1px;background:#bbb"></div><svg style="position:absolute;left:23px;top:150.5px;" width="10" height="10" viewBox="0 0 10 10"><path d="M0.8 0.8 H9.2 V3.2 H8.4 Q8.2 1.8 6.8 1.8 H5.8 V8.3 Q5.8 8.9 6.8 8.9 V9.4 H3.2 V8.9 Q4.2 8.9 4.2 8.3 V1.8 H3.2 Q1.8 1.8 1.6 3.2 H0.8 Z" fill="#d2d2d2"/></svg><svg style="position:absolute;left:5px;top:163.5px;" width="10" height="12" viewBox="0 0 10 12"><path d="M1.2 0.8 L8.5 7.2 H5.2 L6.9 10.6 L5.6 11.2 L3.8 7.8 L1.2 10 Z" fill="#1e1e1e" stroke="#d2d2d2" stroke-width="0.8"/></svg><div style="left:14px;top:173px;width:1px;height:1px;background:#bbb"></div><div style="left:19px;top:163.8px;width:19.3px;height:13.4px;background:#3d3d3d"></div><svg style="position:absolute;left:21.5px;top:165px;" width="11" height="11" viewBox="0 0 11 11"><ellipse cx="5.8" cy="5.2" rx="4.6" ry="3.4" fill="none" stroke="#d2d2d2" stroke-width="0.9"/></svg><svg style="position:absolute;left:4px;top:178.5px;" width="11" height="12" viewBox="0 0 11 12"><path d="M2.5 6 V3 Q2.5 2 3.3 2 Q4 2 4 3 V1.6 Q4 0.8 4.8 0.8 Q5.6 0.8 5.6 1.6 V2 Q5.6 1.2 6.4 1.2 Q7.2 1.2 7.2 2 V3 Q7.2 2.4 8 2.4 Q8.8 2.4 8.8 3.2 V7 Q8.8 10.5 5.6 10.5 Q3.2 10.5 1.2 7.2 Q0.8 6.2 1.6 6 Q2.2 6 2.5 6.6 Z" fill="#d2d2d2"/></svg><div style="left:14px;top:188px;width:1px;height:1px;background:#bbb"></div><svg style="position:absolute;left:21.6px;top:179.5px;" width="11" height="11" viewBox="0 0 11 11"><circle cx="4.8" cy="4.6" r="3.5" fill="none" stroke="#d2d2d2" stroke-width="0.9"/><line x1="7.3" y1="7.1" x2="10.2" y2="10" stroke="#d2d2d2" stroke-width="1.2"/></svg><div style="left:5px;top:198.5px;width:2px;height:2px;background:#d2d2d2"></div><div style="left:8px;top:198.5px;width:2px;height:2px;background:#d2d2d2"></div><div style="left:11px;top:198.5px;width:2px;height:2px;background:#d2d2d2"></div><div style="left:14px;top:204px;width:1px;height:1px;background:#bbb"></div><div style="left:16.7px;top:221px;width:13.6px;height:14px;background:#ffffff;box-shadow:0 0 0 0.7px #3a3a3a"></div><div style="left:8.5px;top:212.6px;width:13px;height:12.6px;background:#0c0c0c;box-shadow:0 0 0 0.6px #2a2a2a, 0 0 0 1.3px #c4c4c4"></div><svg style="position:absolute;left:25.5px;top:211px;" width="7" height="7" viewBox="0 0 7 7"><path d="M1 2 H5 V6" fill="none" stroke="#d2d2d2" stroke-width="0.8"/><path d="M0.5 2 L2 0.8 V3.2 Z M5 6.5 L3.8 5 H6.2 Z" fill="#d2d2d2"/></svg><svg style="position:absolute;left:7.8px;top:231.2px;" width="7" height="7" viewBox="0 0 7 7"><rect x="2.6" y="2.6" width="3.6" height="3.6" fill="#f0f0f0"/><rect x="0.7" y="0.7" width="3.4" height="3.4" rx="1" fill="#111" stroke="#ddd" stroke-width="0.6"/></svg><svg style="position:absolute;left:3.5px;top:242px;" width="11" height="9" viewBox="0 0 11 9"><rect x="0.8" y="0.8" width="9" height="7" fill="none" stroke="#d2d2d2" stroke-width="0.9"/><circle cx="5.3" cy="4.3" r="2.2" fill="none" stroke="#d2d2d2" stroke-width="0.8"/></svg><svg style="position:absolute;left:22px;top:241px;" width="14" height="11" viewBox="0 0 14 11"><rect x="3" y="0.8" width="8" height="6" fill="none" stroke="#d2d2d2" stroke-width="0.9"/><rect x="0.8" y="3" width="8" height="6" fill="#535353" stroke="#d2d2d2" stroke-width="0.9"/><rect x="12" y="9" width="1" height="1" fill="#bbb"/></svg><div style="left:32.1px;top:26px;width:135.9px;height:174.8px;background:#575757;box-shadow:inset 0 0 0 0.6px #4a4a4a, 0 2px 5px rgba(0,0,0,0.3)"></div><div style="left:40.8px;top:34.5px;width:87.5px;height:13.5px;background:#484848"></div><div style="left:62.3px;top:34.5px;width:0.8px;height:13.5px;background:#555"></div><div style="left:84.5px;top:34.5px;width:0.8px;height:13.5px;background:#555"></div><div style="left:106.5px;top:34.5px;width:0.8px;height:13.5px;background:#555"></div><div style="left:63.1px;top:34.5px;width:21.4px;height:13.5px;background:#3b3b3b"></div><svg style="position:absolute;left:44.5px;top:36.3px;" width="14.5" height="10.5" viewBox="0 0 14.5 10.5"><rect x="0.6" y="0.6" width="13" height="9" fill="#fff" stroke="#2a2a2a" stroke-width="0.6"/><line x1="1" y1="9.4" x2="13.4" y2="1" stroke="#e8262a" stroke-width="0.9"/></svg><svg style="position:absolute;left:66.5px;top:36.3px;" width="14.5" height="10.5" viewBox="0 0 14.5 10.5"><rect x="0.7" y="0.7" width="13" height="9" rx="0.8" fill="#0c0c0c" stroke="#c9c9c9" stroke-width="0.8"/></svg><svg style="position:absolute;left:88.5px;top:36.3px;" width="14.5" height="10.5" viewBox="0 0 14.5 10.5"><defs><linearGradient id="gp1"><stop offset="0" stop-color="#1e1e1e"/><stop offset="1" stop-color="#f4f4f4"/></linearGradient></defs><rect x="0.7" y="0.7" width="13" height="9" fill="url(#gp1)" stroke="#c0c0c0" stroke-width="0.7"/></svg><svg style="position:absolute;left:110.5px;top:36.3px;" width="14.5" height="10.5" viewBox="0 0 14.5 10.5"><defs><clipPath id="cp4"><rect x="0.7" y="0.7" width="13" height="9"/></clipPath></defs><rect x="0.7" y="0.7" width="13" height="9" fill="#f0f0f0"/><g clip-path="url(#cp4)"><line x1="-9.0" y1="10.5" x2="0.0" y2="-0.5" stroke="#141414" stroke-width="1.35"/><line x1="-5.8" y1="10.5" x2="3.2" y2="-0.5" stroke="#141414" stroke-width="1.35"/><line x1="-2.5999999999999996" y1="10.5" x2="6.4" y2="-0.5" stroke="#141414" stroke-width="1.35"/><line x1="0.6000000000000014" y1="10.5" x2="9.600000000000001" y2="-0.5" stroke="#141414" stroke-width="1.35"/><line x1="3.8000000000000007" y1="10.5" x2="12.8" y2="-0.5" stroke="#141414" stroke-width="1.35"/><line x1="7.0" y1="10.5" x2="16.0" y2="-0.5" stroke="#141414" stroke-width="1.35"/><line x1="10.200000000000003" y1="10.5" x2="19.200000000000003" y2="-0.5" stroke="#141414" stroke-width="1.35"/><line x1="13.400000000000002" y1="10.5" x2="22.400000000000002" y2="-0.5" stroke="#141414" stroke-width="1.35"/></g><rect x="0.7" y="0.7" width="13" height="9" fill="none" stroke="#bbb" stroke-width="0.6"/></svg><svg style="position:absolute;left:146.7px;top:35.7px;" width="13.2" height="11.3" viewBox="0 0 13.2 11.3"><defs><linearGradient id="cg1"><stop offset="0" stop-color="#10d060"/><stop offset="0.5" stop-color="#e8f070"/><stop offset="1" stop-color="#ffa020"/></linearGradient><linearGradient id="cg2"><stop offset="0" stop-color="#2040ff"/><stop offset="0.5" stop-color="#c080ff"/><stop offset="1" stop-color="#ff0070"/></linearGradient><linearGradient id="cgm" x1="0" y1="0" x2="0" y2="1"><stop offset="0" stop-color="#fff" stop-opacity="0"/><stop offset="1" stop-color="#fff" stop-opacity="1"/></linearGradient><mask id="cmk"><rect x="0" y="0" width="13.2" height="11.3" fill="url(#cgm)"/></mask><radialGradient id="cgw"><stop offset="0" stop-color="#fff" stop-opacity="0.85"/><stop offset="1" stop-color="#fff" stop-opacity="0"/></radialGradient><linearGradient id="cgd"><stop offset="0" stop-color="#000" stop-opacity="0.6"/><stop offset="0.15" stop-color="#000" stop-opacity="0"/></linearGradient></defs><rect x="0.5" y="0.5" width="12.2" height="10.3" fill="none" stroke="#f4f4f4" stroke-width="1.1"/><rect x="1.6" y="1.6" width="10" height="8.1" fill="url(#cg1)"/><rect x="1.6" y="1.6" width="10" height="8.1" fill="url(#cg2)" mask="url(#cmk)"/><rect x="1.6" y="1.6" width="10" height="8.1" fill="url(#cgw)"/><rect x="1.6" y="1.6" width="10" height="8.1" fill="url(#cgd)"/></svg><div style="left:31.5px;top:53px;width:137px;height:0.8px;background:#474747"></div><div class="t" style="left:40.3px;top:61px;line-height:10px;font-size:6.5px;color:#dadada;font-weight:normal;transform:scaleX(0.92);transform-origin:0 0;">Recently Used Colors</div><svg style="position:absolute;left:147px;top:61.5px;" width="10" height="8" viewBox="0 0 10 8"><circle cx="4" cy="4" r="2.4" fill="none" stroke="#d8d8d8" stroke-width="1.6" stroke-dasharray="1.2 0.7"/><circle cx="4" cy="4" r="1.9" fill="none" stroke="#d8d8d8" stroke-width="0.9"/><rect x="8" y="5" width="1" height="1" fill="#bbb"/></svg><svg style="position:absolute;left:0px;top:0px;" width="170" height="90" viewBox="0 0 170 90"><rect x="41.10" y="76.2" width="6.5" height="5.9" fill="#6dcff6"/><rect x="48.45" y="76.2" width="6.5" height="5.9" fill="#000000"/><rect x="55.81" y="76.2" width="6.5" height="5.9" fill="#111111"/><rect x="63.17" y="76.2" width="6.5" height="5.9" fill="#141414"/><rect x="70.52" y="76.2" width="6.5" height="5.9" fill="#962b2e"/><rect x="77.88" y="76.2" width="6.5" height="5.9" fill="#ed1c24"/><rect x="85.23" y="76.2" width="6.5" height="5.9" fill="#ffffff"/><rect x="92.59" y="76.2" width="6.5" height="5.9" fill="#002a80"/><rect x="99.94" y="76.2" width="6.5" height="5.9" fill="#ef7b32"/><rect x="107.30" y="76.2" width="6.5" height="5.9" fill="#ee7a33"/><rect x="114.65" y="76.2" width="6.5" height="5.9" fill="#fbe985"/><rect x="122.00" y="76.2" width="6.5" height="5.9" fill="#002a80"/><rect x="129.36" y="76.2" width="6.5" height="5.9" fill="#e5a32a"/><rect x="136.72" y="76.2" width="6.5" height="5.9" fill="#002a80"/></svg><div style="left:40.8px;top:85.9px;width:118.1px;height:105.3px;background:#474747"></div><svg style="position:absolute;left:0px;top:0px;" width="170" height="200" viewBox="0 0 170 200"><rect x="41.80" y="87.10" width="9.3" height="9.2" fill="#ff0000"/><rect x="52.00" y="87.10" width="9.3" height="9.2" fill="#ffff00"/><rect x="62.20" y="87.10" width="9.3" height="9.2" fill="#00ff00"/><rect x="72.40" y="87.10" width="9.3" height="9.2" fill="#00ffff"/><rect x="82.60" y="87.10" width="9.3" height="9.2" fill="#0000ff"/><rect x="92.80" y="87.10" width="9.3" height="9.2" fill="#ff00ff"/><rect x="103.00" y="87.10" width="9.3" height="9.2" fill="#ffffff"/><rect x="113.20" y="87.10" width="9.3" height="9.2" fill="#ebebeb"/><rect x="123.40" y="87.10" width="9.3" height="9.2" fill="#e1e1e1"/><rect x="133.60" y="87.10" width="9.3" height="9.2" fill="#d7d7d7"/><rect x="143.80" y="87.10" width="6.6" height="9.2" fill="#cccccc"/><rect x="41.80" y="97.30" width="9.3" height="9.2" fill="#c2c2c2"/><rect x="52.00" y="97.30" width="9.3" height="9.2" fill="#b7b7b7"/><rect x="62.20" y="97.30" width="9.3" height="9.2" fill="#acacac"/><rect x="72.40" y="97.30" width="9.3" height="9.2" fill="#a0a0a0"/><rect x="82.60" y="97.30" width="9.3" height="9.2" fill="#ed1c24"/><rect x="92.80" y="97.30" width="9.3" height="9.2" fill="#fff200"/><rect x="103.00" y="97.30" width="9.3" height="9.2" fill="#00a651"/><rect x="113.20" y="97.30" width="9.3" height="9.2" fill="#00aeef"/><rect x="123.40" y="97.30" width="9.3" height="9.2" fill="#2e3192"/><rect x="133.60" y="97.30" width="9.3" height="9.2" fill="#ec008c"/><rect x="143.80" y="97.30" width="6.6" height="9.2" fill="#898989"/><rect x="41.80" y="107.50" width="9.3" height="9.2" fill="#7d7d7d"/><rect x="52.00" y="107.50" width="9.3" height="9.2" fill="#707070"/><rect x="62.20" y="107.50" width="9.3" height="9.2" fill="#646464"/><rect x="72.40" y="107.50" width="9.3" height="9.2" fill="#555555"/><rect x="82.60" y="107.50" width="9.3" height="9.2" fill="#464646"/><rect x="92.80" y="107.50" width="9.3" height="9.2" fill="#363636"/><rect x="103.00" y="107.50" width="9.3" height="9.2" fill="#111111"/><rect x="113.20" y="107.50" width="9.3" height="9.2" fill="#000000"/><rect x="123.40" y="107.50" width="9.3" height="9.2" fill="#f7977a"/><rect x="133.60" y="107.50" width="9.3" height="9.2" fill="#f9ad81"/><rect x="143.80" y="107.50" width="6.6" height="9.2" fill="#fdc68a"/><rect x="41.80" y="117.70" width="9.3" height="9.2" fill="#c4df9b"/><rect x="52.00" y="117.70" width="9.3" height="9.2" fill="#a3d39c"/><rect x="62.20" y="117.70" width="9.3" height="9.2" fill="#82ca9c"/><rect x="72.40" y="117.70" width="9.3" height="9.2" fill="#7accc8"/><rect x="82.60" y="117.70" width="9.3" height="9.2" fill="#6dcff6"/><rect x="92.80" y="117.70" width="9.3" height="9.2" fill="#7da7d9"/><rect x="103.00" y="117.70" width="9.3" height="9.2" fill="#8393ca"/><rect x="113.20" y="117.70" width="9.3" height="9.2" fill="#8781bd"/><rect x="123.40" y="117.70" width="9.3" height="9.2" fill="#a187be"/><rect x="133.60" y="117.70" width="9.3" height="9.2" fill="#bd8cbf"/><rect x="143.80" y="117.70" width="6.6" height="9.2" fill="#f49ac2"/><rect x="41.80" y="127.90" width="9.3" height="9.2" fill="#f26c4f"/><rect x="52.00" y="127.90" width="9.3" height="9.2" fill="#f68e56"/><rect x="62.20" y="127.90" width="9.3" height="9.2" fill="#fbaf5d"/><rect x="72.40" y="127.90" width="9.3" height="9.2" fill="#fff568"/><rect x="82.60" y="127.90" width="9.3" height="9.2" fill="#acd372"/><rect x="92.80" y="127.90" width="9.3" height="9.2" fill="#7cc576"/><rect x="103.00" y="127.90" width="9.3" height="9.2" fill="#3bb878"/><rect x="113.20" y="127.90" width="9.3" height="9.2" fill="#1abbb4"/><rect x="123.40" y="127.90" width="9.3" height="9.2" fill="#00bff3"/><rect x="133.60" y="127.90" width="9.3" height="9.2" fill="#438cca"/><rect x="143.80" y="127.90" width="6.6" height="9.2" fill="#5574b9"/><rect x="41.80" y="138.10" width="9.3" height="9.2" fill="#8560a8"/><rect x="52.00" y="138.10" width="9.3" height="9.2" fill="#a864a8"/><rect x="62.20" y="138.10" width="9.3" height="9.2" fill="#f06ea9"/><rect x="72.40" y="138.10" width="9.3" height="9.2" fill="#f26d7d"/><rect x="82.60" y="138.10" width="9.3" height="9.2" fill="#ed1c24"/><rect x="92.80" y="138.10" width="9.3" height="9.2" fill="#f26522"/><rect x="103.00" y="138.10" width="9.3" height="9.2" fill="#f7941d"/><rect x="113.20" y="138.10" width="9.3" height="9.2" fill="#fff200"/><rect x="123.40" y="138.10" width="9.3" height="9.2" fill="#8dc63f"/><rect x="133.60" y="138.10" width="9.3" height="9.2" fill="#39b54a"/><rect x="143.80" y="138.10" width="6.6" height="9.2" fill="#00a651"/><rect x="41.80" y="148.30" width="9.3" height="9.2" fill="#00aeef"/><rect x="52.00" y="148.30" width="9.3" height="9.2" fill="#0072bc"/><rect x="62.20" y="148.30" width="9.3" height="9.2" fill="#0054a6"/><rect x="72.40" y="148.30" width="9.3" height="9.2" fill="#2e3192"/><rect x="82.60" y="148.30" width="9.3" height="9.2" fill="#662d91"/><rect x="92.80" y="148.30" width="9.3" height="9.2" fill="#92278f"/><rect x="103.00" y="148.30" width="9.3" height="9.2" fill="#ec008c"/><rect x="113.20" y="148.30" width="9.3" height="9.2" fill="#ed145b"/><rect x="123.40" y="148.30" width="9.3" height="9.2" fill="#9e0b0f"/><rect x="133.60" y="148.30" width="9.3" height="9.2" fill="#a0410d"/><rect x="143.80" y="148.30" width="6.6" height="9.2" fill="#a36209"/><rect x="41.80" y="158.50" width="9.3" height="9.2" fill="#598527"/><rect x="52.00" y="158.50" width="9.3" height="9.2" fill="#197b30"/><rect x="62.20" y="158.50" width="9.3" height="9.2" fill="#007236"/><rect x="72.40" y="158.50" width="9.3" height="9.2" fill="#00746b"/><rect x="82.60" y="158.50" width="9.3" height="9.2" fill="#0076a3"/><rect x="92.80" y="158.50" width="9.3" height="9.2" fill="#004b80"/><rect x="103.00" y="158.50" width="9.3" height="9.2" fill="#003471"/><rect x="113.20" y="158.50" width="9.3" height="9.2" fill="#1b1464"/><rect x="123.40" y="158.50" width="9.3" height="9.2" fill="#440e62"/><rect x="133.60" y="158.50" width="9.3" height="9.2" fill="#630460"/><rect x="143.80" y="158.50" width="6.6" height="9.2" fill="#9e005d"/><rect x="41.80" y="168.70" width="9.3" height="9.2" fill="#790000"/><rect x="52.00" y="168.70" width="9.3" height="9.2" fill="#7b2e00"/><rect x="62.20" y="168.70" width="9.3" height="9.2" fill="#7d4900"/><rect x="72.40" y="168.70" width="9.3" height="9.2" fill="#827b00"/><rect x="82.60" y="168.70" width="9.3" height="9.2" fill="#406618"/><rect x="92.80" y="168.70" width="9.3" height="9.2" fill="#005e20"/><rect x="103.00" y="168.70" width="9.3" height="9.2" fill="#005826"/><rect x="113.20" y="168.70" width="9.3" height="9.2" fill="#005952"/><rect x="123.40" y="168.70" width="9.3" height="9.2" fill="#005b7f"/><rect x="133.60" y="168.70" width="9.3" height="9.2" fill="#003663"/><rect x="143.80" y="168.70" width="6.6" height="9.2" fill="#002157"/><rect x="41.80" y="178.90" width="9.3" height="9.2" fill="#32004b"/><rect x="52.00" y="178.90" width="9.3" height="9.2" fill="#4b0049"/><rect x="62.20" y="178.90" width="9.3" height="9.2" fill="#7b0046"/><rect x="72.40" y="178.90" width="9.3" height="9.2" fill="#7a0026"/><rect x="82.60" y="178.90" width="9.3" height="9.2" fill="#c7b299"/><rect x="92.80" y="178.90" width="9.3" height="9.2" fill="#998675"/><rect x="103.00" y="178.90" width="9.3" height="9.2" fill="#736357"/><rect x="113.20" y="178.90" width="9.3" height="9.2" fill="#534741"/><rect x="123.40" y="178.90" width="9.3" height="9.2" fill="#37302d"/><rect x="133.60" y="178.90" width="9.3" height="9.2" fill="#c69c6e"/><rect x="143.80" y="178.90" width="6.6" height="9.2" fill="#a67c52"/><rect x="41.80" y="189.10" width="9.3" height="2.4" fill="#8c6239"/><rect x="52.00" y="189.10" width="9.3" height="2.4" fill="#754c24"/><rect x="62.20" y="189.10" width="9.3" height="2.4" fill="#ffffff"/></svg><div style="left:150.9px;top:88px;width:6px;height:95.5px;background:#6b6b6b;border-radius:3px"></div><svg style="position:absolute;left:160px;top:192px;" width="8" height="8" viewBox="0 0 8 8"><path d="M1 4 L4 1 L7 4 L4 7 Z M2.5 4 L4 2.5 L5.5 4 L4 5.5 Z" fill="none" stroke="#777" stroke-width="0.6"/></svg><div style="left:455.3px;top:59px;width:161px;height:213px;background:#535353;box-shadow:-1px 1px 3px rgba(0,0,0,0.35)"></div><div style="left:455.3px;top:59px;width:161px;height:16.7px;background:#464646"></div><div style="left:455.3px;top:59px;width:40.5px;height:16.7px;background:#535353"></div><div class="t" style="left:460.9px;top:64px;line-height:10px;font-size:6.5px;color:#e6e6e6;font-weight:bold;transform:scaleX(0.88);transform-origin:0 0;">Properties</div><svg style="position:absolute;left:592.5px;top:64.5px;" width="7" height="5" viewBox="0 0 7 5"><polyline points="0.6,0.6 2.4,2.5 0.6,4.4" fill="none" stroke="#ccc" stroke-width="0.8"/><polyline points="3.6,0.6 5.4,2.5 3.6,4.4" fill="none" stroke="#ccc" stroke-width="0.8"/></svg><div style="left:602.2px;top:64px;width:0.9px;height:7px;background:#bbb"></div><div style="left:606.8px;top:65.5px;width:5.5px;height:4.8px;background:#9a9a9a"></div><div style="left:462px;top:79.4px;width:11.8px;height:11.8px;background:#3a3a3a"></div><svg style="position:absolute;left:462px;top:79.4px;" width="12" height="12" viewBox="0 0 12 12"><rect x="3" y="3" width="6" height="6" fill="none" stroke="#d8d8d8" stroke-width="0.9"/><rect x="2" y="2" width="2" height="2" fill="#d8d8d8"/><rect x="8" y="2" width="2" height="2" fill="#d8d8d8"/><rect x="2" y="8" width="2" height="2" fill="#d8d8d8"/><rect x="8" y="8" width="2" height="2" fill="#d8d8d8"/></svg><div style="left:476.8px;top:82.1px;width:9px;height:6.7px;background:#e8e8e8"></div><svg style="position:absolute;left:476.8px;top:82.1px;" width="9" height="6.7" viewBox="0 0 9 6.7"><ellipse cx="4.5" cy="3.35" rx="2.7" ry="2.2" fill="#3a3a3a"/></svg><div class="t" style="left:490.9px;top:81px;line-height:10px;font-size:6.5px;color:#e4e4e4;font-weight:bold;transform:scaleX(0.88);transform-origin:0 0;">Live Shape Properties</div><div style="left:455.3px;top:92.8px;width:161px;height:0.9px;background:#464646"></div><svg style="position:absolute;left:459px;top:100.7px;" width="6" height="4" viewBox="0 0 6 4"><polyline points="0.6,0.8 2.8,3 5,0.8" fill="none" stroke="#c8c8c8" stroke-width="0.8"/></svg><div class="t" style="left:466.9px;top:98px;line-height:10px;font-size:6.5px;color:#dcdcdc;font-weight:normal;transform:scaleX(0.92);transform-origin:0 0;">Bounding Box</div><div style="left:508px;top:102.2px;width:95.79999999999995px;height:0.8px;background:#474747"></div><div class="t" style="left:459.1px;top:112px;line-height:10px;font-size:6.5px;color:#d2d2d2;font-weight:normal;transform:scaleX(0.92);transform-origin:0 0;">W:</div><div style="left:470px;top:112.8px;width:33px;height:7.4px;background:#464646;box-shadow:0 0 0 0.7px #5a5a5a"></div><div class="t" style="left:470.9px;top:112px;line-height:10px;font-size:6.5px;color:#dcdcdc;font-weight:normal;transform:scaleX(0.92);transform-origin:0 0;">115 px</div><svg style="position:absolute;left:508.5px;top:114px;" width="9" height="5" viewBox="0 0 9 5"><rect x="0.5" y="0.5" width="3.6" height="4" rx="1.6" fill="none" stroke="#c8c8c8" stroke-width="0.8"/><rect x="4.8" y="0.5" width="3.6" height="4" rx="1.6" fill="none" stroke="#c8c8c8" stroke-width="0.8"/><line x1="2.5" y1="2.5" x2="6.5" y2="2.5" stroke="#c8c8c8" stroke-width="0.8"/></svg><div class="t" style="left:522.7px;top:112px;line-height:10px;font-size:6.5px;color:#d2d2d2;font-weight:normal;transform:scaleX(0.92);transform-origin:0 0;">H:</div><div style="left:532.6px;top:112.8px;width:33px;height:7.4px;background:#464646;box-shadow:0 0 0 0.7px #5a5a5a"></div><div class="t" style="left:533.5px;top:112px;line-height:10px;font-size:6.5px;color:#dcdcdc;font-weight:normal;transform:scaleX(0.92);transform-origin:0 0;">110 px</div><div class="t" style="left:461px;top:129px;line-height:10px;font-size:6.5px;color:#d2d2d2;font-weight:normal;transform:scaleX(0.92);transform-origin:0 0;">X:</div><div style="left:470px;top:129.7px;width:33px;height:7.3px;background:#464646;box-shadow:0 0 0 0.7px #5a5a5a"></div><div class="t" style="left:470.9px;top:129px;line-height:10px;font-size:6.5px;color:#dcdcdc;font-weight:normal;transform:scaleX(0.92);transform-origin:0 0;">169 px</div><div class="t" style="left:523.7px;top:129px;line-height:10px;font-size:6.5px;color:#d2d2d2;font-weight:normal;transform:scaleX(0.92);transform-origin:0 0;">Y:</div><div style="left:532.6px;top:129.7px;width:33px;height:7.3px;background:#464646;box-shadow:0 0 0 0.7px #5a5a5a"></div><div class="t" style="left:533.5px;top:129px;line-height:10px;font-size:6.5px;color:#dcdcdc;font-weight:normal;transform:scaleX(0.92);transform-origin:0 0;">106 px</div><svg style="position:absolute;left:459px;top:142.7px;" width="6" height="4" viewBox="0 0 6 4"><polyline points="0.6,0.8 2.8,3 5,0.8" fill="none" stroke="#c8c8c8" stroke-width="0.8"/></svg><div class="t" style="left:466.9px;top:140px;line-height:10px;font-size:6.5px;color:#dcdcdc;font-weight:normal;transform:scaleX(0.92);transform-origin:0 0;">Shape Details</div><div style="left:508px;top:144.2px;width:95.79999999999995px;height:0.8px;background:#474747"></div><div style="left:459.6px;top:150.5px;width:16.4px;height:10.8px;background:#4a4a4a"></div><div style="left:460.6px;top:151.5px;width:14.4px;height:8.8px;background:#6ccff6"></div><div style="left:478.8px;top:150.5px;width:15.7px;height:10.8px;background:#4a4a4a"></div><div style="left:479.8px;top:151.5px;width:13.7px;height:8.8px;background:#000"></div><div style="left:482.5px;top:154px;width:8.3px;height:3.6px;box-shadow:inset 0 0 0 0.9px #e0e0e0"></div><div style="left:498px;top:151.3px;width:28.2px;height:9px;background:#464646;box-shadow:0 0 0 0.7px #5a5a5a"></div><div class="t" style="left:499px;top:151px;line-height:10px;font-size:6.5px;color:#dcdcdc;font-weight:normal;transform:scaleX(0.92);transform-origin:0 0;">1 px</div><div style="left:527px;top:151.3px;width:8.3px;height:9px;background:#464646;box-shadow:0 0 0 0.7px #5a5a5a"></div><svg style="position:absolute;left:529.5px;top:154.6px;" width="4" height="3" viewBox="0 0 4 3"><polyline points="0.5,0.7 2.0,2.3 3.5,0.7" fill="none" stroke="#cfcfcf" stroke-width="0.8"/></svg><div style="left:538.5px;top:151.3px;width:26.5px;height:9px;background:#464646;box-shadow:0 0 0 0.7px #5a5a5a"></div><div style="left:540.5px;top:155px;width:16.5px;height:1.4px;background:#f0f0f0"></div><svg style="position:absolute;left:560px;top:154.6px;" width="4" height="3" viewBox="0 0 4 3"><polyline points="0.5,0.7 2.0,2.3 3.5,0.7" fill="none" stroke="#cfcfcf" stroke-width="0.8"/></svg><div style="left:460px;top:167px;width:34.4px;height:8.8px;background:#464646;box-shadow:0 0 0 0.7px #5a5a5a"></div><div style="left:464.5px;top:168.5px;width:3px;height:5.8px;box-shadow:inset 0 0 0 0.8px #e0e0e0"></div><div style="left:464.3px;top:168.2px;width:3.4px;height:6.4px;background:#3b3b3b"></div><div class="t" style="left:465px;top:167.18px;line-height:8.45px;font-size:6.5px;color:#e8e8e8;font-weight:bold;">0</div><svg style="position:absolute;left:489px;top:170.3px;" width="4" height="3" viewBox="0 0 4 3"><polyline points="0.5,0.7 2.0,2.3 3.5,0.7" fill="none" stroke="#cfcfcf" stroke-width="0.8"/></svg><div style="left:498px;top:167px;width:35.8px;height:8.8px;background:#464646;box-shadow:0 0 0 0.7px #5a5a5a"></div><svg style="position:absolute;left:502px;top:168px;" width="8" height="7" viewBox="0 0 8 7"><rect x="3.5" y="0.5" width="3.5" height="6" fill="#d8d8d8"/><rect x="1" y="2.8" width="3" height="1.2" fill="#d8d8d8"/><rect x="4.5" y="2" width="1.5" height="2.5" fill="#3a3a3a"/></svg><svg style="position:absolute;left:528.5px;top:170.3px;" width="4" height="3" viewBox="0 0 4 3"><polyline points="0.5,0.7 2.0,2.3 3.5,0.7" fill="none" stroke="#cfcfcf" stroke-width="0.8"/></svg><div style="left:538.5px;top:167px;width:26.5px;height:8.8px;background:#464646;box-shadow:0 0 0 0.7px #5a5a5a"></div><svg style="position:absolute;left:542px;top:168px;" width="7" height="7" viewBox="0 0 7 7"><path d="M0.5 0.5 H6 V3.5 H3.5 V6.5 H0.5 Z" fill="#e0e0e0"/><path d="M3.5 3.5 L6 6" stroke="#e0e0e0" stroke-width="0.8"/></svg><svg style="position:absolute;left:560px;top:170.3px;" width="4" height="3" viewBox="0 0 4 3"><polyline points="0.5,0.7 2.0,2.3 3.5,0.7" fill="none" stroke="#cfcfcf" stroke-width="0.8"/></svg><svg style="position:absolute;left:459px;top:180.7px;" width="6" height="4" viewBox="0 0 6 4"><polyline points="0.6,0.8 2.8,3 5,0.8" fill="none" stroke="#c8c8c8" stroke-width="0.8"/></svg><div class="t" style="left:466.9px;top:178px;line-height:10px;font-size:6.5px;color:#dcdcdc;font-weight:normal;transform:scaleX(0.92);transform-origin:0 0;">Path Operations</div><div style="left:514px;top:182.2px;width:89.79999999999995px;height:0.8px;background:#474747"></div><div style="left:475.6px;top:188.5px;width:17.2px;height:12.5px;background:#3b3b3b"></div><div style="left:494px;top:188.5px;width:17.2px;height:12.5px;background:#4b4b4b"></div><div style="left:513px;top:188.5px;width:17.2px;height:12.5px;background:#4b4b4b"></div><div style="left:532px;top:188.5px;width:17.2px;height:12.5px;background:#4b4b4b"></div><svg style="position:absolute;left:475.6px;top:188.5px;" width="18" height="13" viewBox="0 0 18 13"><rect x="5" y="3" width="5" height="5" fill="#e0e0e0"/><rect x="7.5" y="5.5" width="5" height="5" fill="#e0e0e0" stroke="#3b3b3b" stroke-width="0.5"/></svg><svg style="position:absolute;left:494px;top:188.5px;" width="18" height="13" viewBox="0 0 18 13"><rect x="5" y="3" width="5" height="5" fill="#e0e0e0"/><rect x="7.5" y="5.5" width="5" height="5" fill="#4b4b4b" stroke="#e0e0e0" stroke-width="0.9"/></svg><svg style="position:absolute;left:513px;top:188.5px;" width="18" height="13" viewBox="0 0 18 13"><rect x="5" y="3" width="5" height="5" fill="none" stroke="#d0d0d0" stroke-width="0.8"/><rect x="7.5" y="5.5" width="5" height="5" fill="none" stroke="#d0d0d0" stroke-width="0.8"/><rect x="7.5" y="5.5" width="2.5" height="2.5" fill="#e0e0e0"/></svg><svg style="position:absolute;left:532px;top:188.5px;" width="18" height="13" viewBox="0 0 18 13"><rect x="5" y="3" width="5" height="5" fill="#e0e0e0"/><rect x="7.5" y="5.5" width="5" height="5" fill="#e0e0e0"/><rect x="7.5" y="5.5" width="2.5" height="2.5" fill="#3b3b3b"/></svg><div style="left:607px;top:96px;width:8.6px;height:157px;background:#4e4e4e"></div><div style="left:455.3px;top:267px;width:161px;height:0.9px;background:#383838"></div><div style="left:455.3px;top:267.9px;width:161px;height:4px;background:#4f4f4f"></div><div style="left:616.5px;top:29px;width:151.5px;height:380px;background:#535353"></div><div style="left:616.5px;top:28.6px;width:151.5px;height:8px;background:#434343"></div><svg style="position:absolute;left:630.6px;top:31.2px;" width="5" height="3.4" viewBox="0 0 5 3.4"><polyline points="1.9,0.4 0.6,1.7 1.9,3" fill="none" stroke="#c8c8c8" stroke-width="0.6"/><polyline points="4.2,0.4 2.9,1.7 4.2,3" fill="none" stroke="#c8c8c8" stroke-width="0.6"/></svg><div style="left:616.5px;top:36.5px;width:22px;height:373px;background:#4a4a4a"></div><div style="left:638.3px;top:36.5px;width:1px;height:373px;background:#3c3c3c"></div><div style="left:617.2px;top:36.5px;width:20.6px;height:21.700000000000003px;background:#535353"></div><div style="left:621.5px;top:39.0px;width:12px;height:1px;background:#464646"></div><div style="left:617.2px;top:58.8px;width:20.6px;height:23.400000000000006px;background:#535353"></div><div style="left:621.5px;top:61.3px;width:12px;height:1px;background:#464646"></div><div style="left:617.2px;top:82.8px;width:20.6px;height:38.60000000000001px;background:#535353"></div><div style="left:621.5px;top:85.3px;width:12px;height:1px;background:#464646"></div><div style="left:617.2px;top:122px;width:20.6px;height:22px;background:#535353"></div><div style="left:621.5px;top:124.5px;width:12px;height:1px;background:#464646"></div><svg style="position:absolute;left:621px;top:44.5px;" width="13" height="10" viewBox="0 0 13 10"><rect x="1.5" y="0.5" width="3.5" height="3.5" fill="none" stroke="#d8d8d8" stroke-width="0.8"/><rect x="1.5" y="4" width="3.5" height="3" fill="none" stroke="#d8d8d8" stroke-width="0.8"/><rect x="1.5" y="7" width="3.5" height="2.5" fill="#d8d8d8"/><path d="M7.5 1.5 Q10.5 2.5 10 6 Q9.5 8 7.5 8.5" fill="none" stroke="#d8d8d8" stroke-width="0.9"/><path d="M7 1 L8.5 0.5 L8 2.3 Z" fill="#d8d8d8"/></svg><div style="left:620px;top:66.8px;width:15px;height:11.2px;background:#2e2e2e"></div><svg style="position:absolute;left:620px;top:66.8px;" width="15" height="11.2" viewBox="0 0 15 11.2"><circle cx="5.5" cy="4" r="2.4" fill="none" stroke="#d8d8d8" stroke-width="0.8"/><path d="M3.5 3 L7.5 5 M3.5 5 L7.5 3" stroke="#d8d8d8" stroke-width="0.5"/><rect x="9.5" y="1.5" width="2.5" height="2" fill="#d8d8d8"/><rect x="9.5" y="4.5" width="2.5" height="2" fill="#d8d8d8"/><rect x="2.5" y="8" width="9.5" height="2" fill="#d8d8d8"/></svg><svg style="position:absolute;left:621px;top:89.5px;" width="14" height="12" viewBox="0 0 14 12"><rect x="1" y="1" width="1.2" height="1" fill="#d8d8d8"/><rect x="3" y="1" width="3" height="1" fill="#d8d8d8"/><rect x="1" y="3" width="1.2" height="1" fill="#d8d8d8"/><rect x="3" y="3" width="3" height="1" fill="#d8d8d8"/><rect x="1" y="5" width="1.2" height="1" fill="#d8d8d8"/><path d="M13 2 L8 7.5 L7 6.5 Z" fill="#d8d8d8"/><path d="M7 7 Q4.5 8 5 11 Q8 10.5 8 8 Z" fill="#d8d8d8"/></svg><svg style="position:absolute;left:621px;top:106.5px;" width="14" height="12" viewBox="0 0 14 12"><path d="M1.5 2.5 Q4 0.3 6.5 2 L6.5 3 Q4 4.7 1.5 2.5 Z" fill="#d8d8d8"/><rect x="6.5" y="2" width="6" height="1" fill="#d8d8d8"/><rect x="1.5" y="7.3" width="6" height="1" fill="#d8d8d8"/><path d="M7.5 6.5 L7.5 9 Q10 9.5 12 10 Q12.5 7.8 12 5.5 Q10 6 7.5 6.5 Z" fill="#d8d8d8"/></svg><svg style="position:absolute;left:621px;top:129px;" width="14" height="12" viewBox="0 0 14 12"><path d="M2 1.5 Q3 1 4 2 L10.5 8.5" fill="none" stroke="#d8d8d8" stroke-width="0.9"/><circle cx="10.8" cy="9.3" r="1.3" fill="none" stroke="#d8d8d8" stroke-width="0.8"/><path d="M11.5 1 L6 6" stroke="#d8d8d8" stroke-width="0.9"/><path d="M6.5 5.5 L2 10.5 L1.3 9.8 L5.5 5 Z" fill="#d8d8d8" stroke="#d8d8d8" stroke-width="0.8"/></svg><div style="left:639.3px;top:36.5px;width:128.7px;height:15.3px;background:#434343"></div><div style="left:639.8px;top:36.5px;width:26px;height:15.3px;background:#4a4a4a"></div><div style="left:666.2px;top:36.5px;width:37px;height:15.3px;background:#535353"></div><div class="t" style="left:644.6px;top:40px;line-height:10px;font-size:6.5px;color:#d0d0d0;font-weight:normal;transform:scaleX(0.95);transform-origin:0 0;">Color</div><div class="t" style="left:670.8px;top:40px;line-height:10px;font-size:6.5px;color:#eaeaea;font-weight:bold;transform:scaleX(0.88);transform-origin:0 0;">Swatches</div><svg style="position:absolute;left:600px;top:50px;" width="168" height="20" viewBox="0 0 168 20"><rect x="42.90" y="7.8" width="8.4" height="8.5" fill="#6dcff6"/><rect x="52.50" y="7.8" width="8.4" height="8.5" fill="#000000"/><rect x="62.10" y="7.8" width="8.4" height="8.5" fill="#111111"/><rect x="71.70" y="7.8" width="8.4" height="8.5" fill="#141414"/><rect x="81.30" y="7.8" width="8.4" height="8.5" fill="#962b2e"/><rect x="90.90" y="7.8" width="8.4" height="8.5" fill="#ed1c24"/><rect x="100.50" y="7.8" width="8.4" height="8.5" fill="#ffffff"/><rect x="110.10" y="7.8" width="8.4" height="8.5" fill="#002a80"/><rect x="119.70" y="7.8" width="8.4" height="8.5" fill="#ef7b32"/><rect x="129.30" y="7.8" width="8.4" height="8.5" fill="#ee7a33"/><rect x="138.90" y="7.8" width="8.4" height="8.5" fill="#fbe985"/><rect x="148.50" y="7.8" width="8.4" height="8.5" fill="#002a80"/><rect x="158.10" y="7.8" width="8.4" height="8.5" fill="#e5a32a"/><rect x="167.70" y="7.8" width="8.4" height="8.5" fill="#002a80"/></svg><svg style="position:absolute;left:0px;top:0px;" width="768" height="160" viewBox="0 0 768 160"><rect x="640.00" y="75.30" width="9.2" height="9.1" fill="#ff0000"/><rect x="650.15" y="75.30" width="9.2" height="9.1" fill="#ffff00"/><rect x="660.30" y="75.30" width="9.2" height="9.1" fill="#00ff00"/><rect x="670.45" y="75.30" width="9.2" height="9.1" fill="#00ffff"/><rect x="680.60" y="75.30" width="9.2" height="9.1" fill="#0000ff"/><rect x="690.75" y="75.30" width="9.2" height="9.1" fill="#ff00ff"/><rect x="700.90" y="75.30" width="9.2" height="9.1" fill="#ffffff"/><rect x="711.05" y="75.30" width="9.2" height="9.1" fill="#ebebeb"/><rect x="721.20" y="75.30" width="9.2" height="9.1" fill="#e1e1e1"/><rect x="731.35" y="75.30" width="9.2" height="9.1" fill="#d7d7d7"/><rect x="741.50" y="75.30" width="9.2" height="9.1" fill="#cccccc"/><rect x="751.65" y="75.30" width="9.2" height="9.1" fill="#c2c2c2"/><rect x="761.80" y="75.30" width="9.2" height="9.1" fill="#b7b7b7"/><rect x="640.00" y="85.40" width="9.2" height="9.1" fill="#00aeef"/><rect x="650.15" y="85.40" width="9.2" height="9.1" fill="#2e3192"/><rect x="660.30" y="85.40" width="9.2" height="9.1" fill="#ec008c"/><rect x="670.45" y="85.40" width="9.2" height="9.1" fill="#898989"/><rect x="680.60" y="85.40" width="9.2" height="9.1" fill="#7d7d7d"/><rect x="690.75" y="85.40" width="9.2" height="9.1" fill="#707070"/><rect x="700.90" y="85.40" width="9.2" height="9.1" fill="#646464"/><rect x="711.05" y="85.40" width="9.2" height="9.1" fill="#555555"/><rect x="721.20" y="85.40" width="9.2" height="9.1" fill="#464646"/><rect x="731.35" y="85.40" width="9.2" height="9.1" fill="#363636"/><rect x="741.50" y="85.40" width="9.2" height="9.1" fill="#262626"/><rect x="751.65" y="85.40" width="9.2" height="9.1" fill="#111111"/><rect x="761.80" y="85.40" width="9.2" height="9.1" fill="#000000"/><rect x="640.00" y="95.50" width="9.2" height="9.1" fill="#82ca9c"/><rect x="650.15" y="95.50" width="9.2" height="9.1" fill="#7accc8"/><rect x="660.30" y="95.50" width="9.2" height="9.1" fill="#6dcff6"/><rect x="670.45" y="95.50" width="9.2" height="9.1" fill="#7da7d9"/><rect x="680.60" y="95.50" width="9.2" height="9.1" fill="#8393ca"/><rect x="690.75" y="95.50" width="9.2" height="9.1" fill="#8781bd"/><rect x="700.90" y="95.50" width="9.2" height="9.1" fill="#a187be"/><rect x="711.05" y="95.50" width="9.2" height="9.1" fill="#bd8cbf"/><rect x="721.20" y="95.50" width="9.2" height="9.1" fill="#f49ac2"/><rect x="731.35" y="95.50" width="9.2" height="9.1" fill="#f6989d"/><rect x="741.50" y="95.50" width="9.2" height="9.1" fill="#f26c4f"/><rect x="751.65" y="95.50" width="9.2" height="9.1" fill="#f68e56"/><rect x="761.80" y="95.50" width="9.2" height="9.1" fill="#fbaf5d"/><rect x="640.00" y="105.60" width="9.2" height="9.1" fill="#438cca"/><rect x="650.15" y="105.60" width="9.2" height="9.1" fill="#5574b9"/><rect x="660.30" y="105.60" width="9.2" height="9.1" fill="#605ca8"/><rect x="670.45" y="105.60" width="9.2" height="9.1" fill="#855fa8"/><rect x="680.60" y="105.60" width="9.2" height="9.1" fill="#a864a8"/><rect x="690.75" y="105.60" width="9.2" height="9.1" fill="#f06ea9"/><rect x="700.90" y="105.60" width="9.2" height="9.1" fill="#f26d7d"/><rect x="711.05" y="105.60" width="9.2" height="9.1" fill="#ed1c24"/><rect x="721.20" y="105.60" width="9.2" height="9.1" fill="#f26522"/><rect x="731.35" y="105.60" width="9.2" height="9.1" fill="#f7941d"/><rect x="741.50" y="105.60" width="9.2" height="9.1" fill="#fff200"/><rect x="751.65" y="105.60" width="9.2" height="9.1" fill="#8dc63f"/><rect x="761.80" y="105.60" width="9.2" height="9.1" fill="#39b54a"/><rect x="640.00" y="115.70" width="9.2" height="9.1" fill="#662d91"/><rect x="650.15" y="115.70" width="9.2" height="9.1" fill="#92278f"/><rect x="660.30" y="115.70" width="9.2" height="9.1" fill="#ec008c"/><rect x="670.45" y="115.70" width="9.2" height="9.1" fill="#ed145b"/><rect x="680.60" y="115.70" width="9.2" height="9.1" fill="#9e0b0f"/><rect x="690.75" y="115.70" width="9.2" height="9.1" fill="#a0410d"/><rect x="700.90" y="115.70" width="9.2" height="9.1" fill="#a36209"/><rect x="711.05" y="115.70" width="9.2" height="9.1" fill="#aba000"/><rect x="721.20" y="115.70" width="9.2" height="9.1" fill="#598527"/><rect x="731.35" y="115.70" width="9.2" height="9.1" fill="#197b30"/><rect x="741.50" y="115.70" width="9.2" height="9.1" fill="#007236"/><rect x="751.65" y="115.70" width="9.2" height="9.1" fill="#00746b"/><rect x="761.80" y="115.70" width="9.2" height="9.1" fill="#0076a3"/><rect x="640.00" y="125.80" width="9.2" height="9.1" fill="#9e0039"/><rect x="650.15" y="125.80" width="9.2" height="9.1" fill="#790000"/><rect x="660.30" y="125.80" width="9.2" height="9.1" fill="#7b2e00"/><rect x="670.45" y="125.80" width="9.2" height="9.1" fill="#7d4900"/><rect x="680.60" y="125.80" width="9.2" height="9.1" fill="#827b00"/><rect x="690.75" y="125.80" width="9.2" height="9.1" fill="#406618"/><rect x="700.90" y="125.80" width="9.2" height="9.1" fill="#005e20"/><rect x="711.05" y="125.80" width="9.2" height="9.1" fill="#005826"/><rect x="721.20" y="125.80" width="9.2" height="9.1" fill="#005952"/><rect x="731.35" y="125.80" width="9.2" height="9.1" fill="#005b7f"/><rect x="741.50" y="125.80" width="9.2" height="9.1" fill="#003663"/><rect x="751.65" y="125.80" width="9.2" height="9.1" fill="#002157"/><rect x="761.80" y="125.80" width="9.2" height="9.1" fill="#0d004c"/><rect x="640.00" y="135.90" width="9.2" height="9.1" fill="#736357"/><rect x="650.15" y="135.90" width="9.2" height="9.1" fill="#534741"/><rect x="660.30" y="135.90" width="9.2" height="9.1" fill="#37302d"/><rect x="670.45" y="135.90" width="9.2" height="9.1" fill="#c69c6e"/><rect x="680.60" y="135.90" width="9.2" height="9.1" fill="#a67c52"/><rect x="690.75" y="135.90" width="9.2" height="9.1" fill="#8c6239"/><rect x="700.90" y="135.90" width="9.2" height="9.1" fill="#754c24"/><rect x="711.05" y="135.90" width="9.2" height="9.1" fill="#603913"/><rect x="721.20" y="135.90" width="9.2" height="9.1" fill="#ffffff"/></svg><div style="left:639.3px;top:179.6px;width:128.7px;height:1.2px;background:#474747"></div><div style="left:639.3px;top:180.8px;width:128.7px;height:13.4px;background:#585858"></div><div style="left:639.3px;top:194.2px;width:128.7px;height:17px;background:#424242"></div><div style="left:640px;top:195.3px;width:26px;height:15.9px;background:#4a4a4a"></div><div class="t" style="left:644.7px;top:200px;line-height:10px;font-size:6.5px;color:#cccccc;font-weight:normal;transform:scaleX(0.95);transform-origin:0 0;">Learn</div><div style="left:666.6px;top:195.3px;width:35.39999999999998px;height:15.9px;background:#4a4a4a"></div><div class="t" style="left:671.3000000000001px;top:200px;line-height:10px;font-size:6.5px;color:#cccccc;font-weight:normal;transform:scaleX(1.0);transform-origin:0 0;">Libraries</div><div style="left:702.6px;top:195.3px;width:48.39999999999998px;height:15.9px;background:#4a4a4a"></div><div class="t" style="left:707.3000000000001px;top:200px;line-height:10px;font-size:6.5px;color:#cccccc;font-weight:normal;transform:scaleX(1.0);transform-origin:0 0;">Adjustments</div><div style="left:751.6px;top:195.3px;width:16.399999999999977px;height:15.9px;background:#535353"></div><div class="t" style="left:756.3000000000001px;top:200px;line-height:10px;font-size:6.5px;color:#e6e6e6;font-weight:bold;transform:scaleX(0.95);transform-origin:0 0;">Styles</div><div style="left:639.3px;top:211.2px;width:128.7px;height:21.5px;background:#535353"></div><div style="left:640.0px;top:215px;width:17.2px;height:17px;background:#4b4b4b"></div><div style="left:657.9px;top:215px;width:17.2px;height:17px;background:#4b4b4b"></div><div style="left:675.8px;top:215px;width:17.2px;height:17px;background:#4b4b4b"></div><div style="left:693.7px;top:215px;width:17.2px;height:17px;background:#4b4b4b"></div><div style="left:711.6px;top:215px;width:17.2px;height:17px;background:#4b4b4b"></div><div style="left:729.5px;top:215px;width:17.2px;height:17px;background:#4b4b4b"></div><div style="left:747.4px;top:215px;width:17.2px;height:17px;background:#4b4b4b"></div><svg style="position:absolute;left:643px;top:218.5px;" width="11" height="11" viewBox="0 0 11 11"><rect x="0.6" y="0.6" width="9.6" height="9.6" fill="#fff" stroke="#111" stroke-width="1"/><line x1="-0.5" y1="-0.5" x2="11" y2="11" stroke="#e01820" stroke-width="1.1"/></svg><div style="left:662px;top:219px;width:9px;height:9px;background:#5e5e5e;box-shadow:0 1px 1px rgba(0,0,0,0.5)"></div><div style="left:680px;top:219px;width:9.2px;height:9px;background:linear-gradient(#7fdcf6,#1ab2e8)"></div><div style="left:698px;top:219px;width:9px;height:9px;background:#3ab0e0;box-shadow:inset 0 0 0 1px #0f5f80"></div><div style="left:700.5px;top:221.5px;width:4px;height:4px;background:#c9f0ff"></div><div style="left:702px;top:223px;width:1px;height:1px;background:#335"></div><div style="left:716px;top:219px;width:9.2px;height:9px;background:#ffffff"></div><div style="left:717.6px;top:220.6px;width:6px;height:5.8px;background:#bfeefe"></div><div style="left:720.1px;top:223px;width:1px;height:1px;background:#335"></div><svg style="position:absolute;left:734px;top:218.8px;" width="9.5" height="9.5" viewBox="0 0 9.5 9.5"><defs><linearGradient id="st6"><stop offset="0" stop-color="#ff40a0"/><stop offset="0.3" stop-color="#ffe040"/><stop offset="0.6" stop-color="#40e0ff"/><stop offset="1" stop-color="#c040ff"/></linearGradient><linearGradient id="st6w" x1="0" y1="0" x2="0" y2="1"><stop offset="0" stop-color="#fff" stop-opacity="0"/><stop offset="1" stop-color="#fff" stop-opacity="1"/></linearGradient></defs><rect width="9.5" height="9.5" fill="url(#st6)"/><rect width="9.5" height="9.5" fill="url(#st6w)"/></svg><svg style="position:absolute;left:752px;top:218.8px;" width="9.5" height="9.5" viewBox="0 0 9.5 9.5"><rect x="0" width="1.6" height="9.5" fill="#ff3030"/><rect x="1.6" width="1.6" height="9.5" fill="#ffb020"/><rect x="3.2" width="1.6" height="9.5" fill="#e8f020"/><rect x="4.8" width="1.6" height="9.5" fill="#30d040"/><rect x="6.4" width="1.6" height="9.5" fill="#3080ff"/><rect x="8" width="1.5" height="9.5" fill="#c030e0"/></svg><div style="left:639.3px;top:232.7px;width:128.7px;height:0.9px;background:#454545"></div><div style="left:753px;top:233.5px;width:15px;height:17px;background:#4b4b4b"></div><div style="left:753.5px;top:233.5px;width:14.5px;height:16.5px;background:#555555"></div><svg style="position:absolute;left:753.5px;top:236px;" width="10" height="10" viewBox="0 0 10 10"><path d="M1 2 Q4 0.5 8 2.5" fill="none" stroke="#bbb" stroke-width="0.9"/><path d="M2 4.5 Q5 3 8 4.5" fill="none" stroke="#999" stroke-width="0.7"/><rect x="2" y="7.5" width="6" height="0.8" fill="#aaa"/></svg><div style="left:753px;top:250.5px;width:15px;height:117.5px;background:#4c4c4c"></div><div style="left:753px;top:368px;width:15px;height:15px;background:#595959"></div><div style="left:753px;top:383px;width:15px;height:17px;background:#414141"></div><div style="left:753px;top:400px;width:15px;height:9px;background:#5f5f5f"></div><div style="left:619.4px;top:233.2px;width:133.8px;height:176px;background:#535353;box-shadow:0 0 0 0.7px #383838, -1px 1px 2px rgba(0,0,0,0.3)"></div><div style="left:619.5px;top:233.2px;width:133.5px;height:7.5px;background:#424242"></div><svg style="position:absolute;left:621.5px;top:235px;" width="6" height="5" viewBox="0 0 6 5"><path d="M1 0.8 L4.5 4.2 M4.5 0.8 L1 4.2" stroke="#bbb" stroke-width="0.8"/></svg><svg style="position:absolute;left:744.8px;top:236px;" width="5" height="4" viewBox="0 0 5 4"><polyline points="2.2,0.5 0.6,2 2.2,3.5" fill="none" stroke="#bbb" stroke-width="0.6"/><polyline points="4.5,0.5 2.9,2 4.5,3.5" fill="none" stroke="#bbb" stroke-width="0.6"/></svg><div style="left:619.5px;top:240.7px;width:133.5px;height:16px;background:#474747"></div><div style="left:619.5px;top:240.7px;width:29.5px;height:16px;background:#535353"></div><div class="t" style="left:624.8px;top:245px;line-height:10px;font-size:6.5px;color:#eaeaea;font-weight:bold;transform:scaleX(0.88);transform-origin:0 0;">Layers</div><div style="left:744px;top:246.3px;width:5.6px;height:5px;background:#7c7c7c"></div><div style="left:622.3px;top:262px;width:48.7px;height:8.7px;background:#464646;box-shadow:0 0 0 0.7px #5a5a5a"></div><svg style="position:absolute;left:625.5px;top:263px;" width="6" height="7" viewBox="0 0 6 7"><circle cx="3.6" cy="2.6" r="1.8" fill="none" stroke="#d8d8d8" stroke-width="0.8"/><line x1="2.4" y1="3.9" x2="0.6" y2="6" stroke="#d8d8d8" stroke-width="0.9"/></svg><div class="t" style="left:633.5px;top:262px;line-height:10px;font-size:6.5px;color:#dcdcdc;font-weight:normal;transform:scaleX(0.92);transform-origin:0 0;">Kind</div><svg style="position:absolute;left:665.5px;top:265.4px;" width="4" height="3" viewBox="0 0 4 3"><polyline points="0.5,0.7 2.0,2.3 3.5,0.7" fill="none" stroke="#cfcfcf" stroke-width="0.8"/></svg><svg style="position:absolute;left:677px;top:263px;" width="8" height="8" viewBox="0 0 8 8"><rect x="0.6" y="0.6" width="6.8" height="6.2" fill="none" stroke="#d6d6d6" stroke-width="0.8"/><path d="M1.3 6 L3 3.5 L4.2 4.8 L5.2 3.8 L6.8 6 Z" fill="#d6d6d6"/></svg><svg style="position:absolute;left:690.5px;top:263px;" width="8" height="8" viewBox="0 0 8 8"><circle cx="4" cy="4" r="3.2" fill="none" stroke="#d6d6d6" stroke-width="0.8"/><path d="M1.7 6.3 A3.2 3.2 0 0 1 6.3 1.7 Z" fill="#d6d6d6"/></svg><div class="t" style="left:705px;top:260.95px;line-height:11.7px;font-size:9px;color:#d6d6d6;font-weight:normal;font-family:"Liberation Serif",serif">T</div><svg style="position:absolute;left:718px;top:263px;" width="8" height="8" viewBox="0 0 8 8"><rect x="1.2" y="1.2" width="5.6" height="5.6" fill="none" stroke="#d6d6d6" stroke-width="0.9"/><rect x="0.3" y="0.3" width="1.8" height="1.8" fill="#d6d6d6"/><rect x="5.9" y="0.3" width="1.8" height="1.8" fill="#d6d6d6"/><rect x="0.3" y="5.9" width="1.8" height="1.8" fill="#d6d6d6"/><rect x="5.9" y="5.9" width="1.8" height="1.8" fill="#d6d6d6"/></svg><svg style="position:absolute;left:731.5px;top:263px;" width="8" height="8.5" viewBox="0 0 8 8.5"><path d="M3 0.8 H5.5 L7.3 2.6 V7.5 H3 Z" fill="none" stroke="#d6d6d6" stroke-width="0.8"/><rect x="0.5" y="4" width="4" height="4" fill="#d6d6d6"/></svg><div style="left:745.8px;top:265.5px;width:5px;height:6px;background:#404040;border-radius:2.5px"></div><svg style="position:absolute;left:745.3px;top:261.5px;" width="6" height="6" viewBox="0 0 6 6"><circle cx="3" cy="3" r="2.4" fill="#e6e6e6"/></svg><div style="left:619.5px;top:274.5px;width:133.5px;height:0.8px;background:#474747"></div><div style="left:622.3px;top:277.6px;width:72.4px;height:9.3px;background:#464646;box-shadow:0 0 0 0.7px #5a5a5a"></div><div class="t" style="left:626px;top:278px;line-height:10px;font-size:6.5px;color:#dcdcdc;font-weight:normal;transform:scaleX(0.92);transform-origin:0 0;">Normal</div><svg style="position:absolute;left:688.5px;top:281px;" width="4" height="3" viewBox="0 0 4 3"><polyline points="0.5,0.7 2.0,2.3 3.5,0.7" fill="none" stroke="#cfcfcf" stroke-width="0.8"/></svg><div class="t" style="left:697.5px;top:278px;line-height:10px;font-size:6.5px;color:#d2d2d2;font-weight:normal;transform:scaleX(0.92);transform-origin:0 0;">Opacity:</div><div style="left:722px;top:278.2px;width:19px;height:8.5px;background:#464646;box-shadow:0 0 0 0.7px #5a5a5a"></div><div class="t" style="left:723.5px;top:278px;line-height:10px;font-size:6.5px;color:#dcdcdc;font-weight:normal;transform:scaleX(0.92);transform-origin:0 0;">100%</div><div style="left:742px;top:278.2px;width:8.3px;height:8.5px;background:#464646;box-shadow:0 0 0 0.7px #5a5a5a"></div><svg style="position:absolute;left:744.3px;top:281.2px;" width="4" height="3" viewBox="0 0 4 3"><polyline points="0.5,0.7 2.0,2.3 3.5,0.7" fill="none" stroke="#cfcfcf" stroke-width="0.8"/></svg><div style="left:619.5px;top:289.8px;width:133.5px;height:0.8px;background:#474747"></div><div class="t" style="left:623px;top:294px;line-height:10px;font-size:6.5px;color:#d2d2d2;font-weight:normal;transform:scaleX(0.92);transform-origin:0 0;">Lock:</div><svg style="position:absolute;left:640.5px;top:294.8px;" width="7" height="7.5" viewBox="0 0 7 7.5"><rect x="0.4" y="0.4" width="6.2" height="6.6" fill="none" stroke="#bdbdbd" stroke-width="0.6"/><rect x="0.7" y="0.7" width="1.9" height="1.9" fill="#c8c8c8"/><rect x="4.4" y="0.7" width="1.9" height="1.9" fill="#c8c8c8"/><rect x="2.55" y="2.7" width="1.9" height="2" fill="#c8c8c8"/><rect x="0.7" y="4.8" width="1.9" height="1.9" fill="#c8c8c8"/><rect x="4.4" y="4.8" width="1.9" height="1.9" fill="#c8c8c8"/></svg><svg style="position:absolute;left:652.5px;top:294.5px;" width="9" height="8.5" viewBox="0 0 9 8.5"><path d="M8.3 0.6 L4.2 5.2 L3.5 4.5 Z" fill="#bdbdbd" stroke="#bdbdbd" stroke-width="0.5"/><path d="M3.3 4.6 Q1.2 5.4 0.8 7.9 Q3.6 7.3 4.2 5.3 Z" fill="#b5b5b5"/></svg><svg style="position:absolute;left:664.8px;top:294.6px;" width="8" height="8" viewBox="0 0 8 8"><path d="M4 0.3 L5.3 1.8 H4.45 V3.55 H6.2 V2.7 L7.7 4 L6.2 5.3 V4.45 H4.45 V6.2 H5.3 L4 7.7 L2.7 6.2 H3.55 V4.45 H1.8 V5.3 L0.3 4 L1.8 2.7 V3.55 H3.55 V1.8 H2.7 Z" fill="#d0d0d0"/></svg><svg style="position:absolute;left:676.8px;top:294.6px;" width="9" height="8" viewBox="0 0 9 8"><path d="M1.8 0.3 V7.7 M6.2 0.3 V7.7 M0.3 1.8 H7.7 M0.3 6.2 H7.7" stroke="#d0d0d0" stroke-width="0.8"/><path d="M4.2 1.8 L6.2 3.8" stroke="#d0d0d0" stroke-width="0.7"/><rect x="7.2" y="0.2" width="1" height="1" fill="#d0d0d0"/></svg><svg style="position:absolute;left:690.5px;top:294.6px;" width="7" height="8" viewBox="0 0 7 8"><path d="M1.9 3.4 V2.3 A1.6 1.6 0 0 1 5.1 2.3 V3.4" fill="none" stroke="#e0e0e0" stroke-width="1"/><rect x="0.7" y="3.4" width="5.6" height="4.2" fill="#e0e0e0"/><circle cx="3.5" cy="5.4" r="0.6" fill="#666"/></svg><div class="t" style="left:710px;top:294px;line-height:10px;font-size:6.5px;color:#d2d2d2;font-weight:normal;transform:scaleX(0.92);transform-origin:0 0;">Fill:</div><div style="left:722px;top:294px;width:19px;height:8.5px;background:#464646;box-shadow:0 0 0 0.7px #5a5a5a"></div><div class="t" style="left:723.5px;top:294px;line-height:10px;font-size:6.5px;color:#dcdcdc;font-weight:normal;transform:scaleX(0.92);transform-origin:0 0;">100%</div><div style="left:742px;top:294px;width:8.3px;height:8.5px;background:#464646;box-shadow:0 0 0 0.7px #5a5a5a"></div><svg style="position:absolute;left:744.3px;top:297px;" width="4" height="3" viewBox="0 0 4 3"><polyline points="0.5,0.7 2.0,2.3 3.5,0.7" fill="none" stroke="#cfcfcf" stroke-width="0.8"/></svg><div style="left:619.5px;top:307.3px;width:133.5px;height:0.8px;background:#474747"></div><div style="left:744.4px;top:308px;width:8.6px;height:101px;background:#4f4f4f"></div><div style="left:619.5px;top:325.1px;width:125px;height:0.6px;background:#484848"></div><div style="left:636.3px;top:308px;width:0.7px;height:17.4px;background:#484848"></div><svg style="position:absolute;left:624.3px;top:313.7px;" width="9" height="6" viewBox="0 0 9 6"><path d="M0.6 3 Q4.5 -1 8.4 3 Q4.5 7 0.6 3 Z" fill="#e0e0e0"/><circle cx="4.5" cy="3" r="1.3" fill="#535353"/></svg><div style="left:639.2px;top:310.8px;width:17.4px;height:11.6px;background-color:#f4f4f4;background-image:linear-gradient(45deg,#dcdcdc 25%,transparent 25%,transparent 75%,#dcdcdc 75%),linear-gradient(45deg,#dcdcdc 25%,transparent 25%,transparent 75%,#dcdcdc 75%);background-size:2px 2px;background-position:0 0,1px 1px"></div><div class="t" style="left:661.6px;top:313px;line-height:10px;font-size:6.5px;color:#e2e2e2;font-weight:normal;transform:scaleX(0.92);transform-origin:0 0;">Text</div><div style="left:619.5px;top:342.5px;width:125px;height:0.6px;background:#484848"></div><div style="left:636.3px;top:325.4px;width:0.7px;height:17.4px;background:#484848"></div><svg style="position:absolute;left:624.3px;top:331.09999999999997px;" width="9" height="6" viewBox="0 0 9 6"><path d="M0.6 3 Q4.5 -1 8.4 3 Q4.5 7 0.6 3 Z" fill="#e0e0e0"/><circle cx="4.5" cy="3" r="1.3" fill="#535353"/></svg><div style="left:639.2px;top:328.2px;width:17.4px;height:11.6px;background-color:#f4f4f4;background-image:linear-gradient(45deg,#dcdcdc 25%,transparent 25%,transparent 75%,#dcdcdc 75%),linear-gradient(45deg,#dcdcdc 25%,transparent 25%,transparent 75%,#dcdcdc 75%);background-size:2px 2px;background-position:0 0,1px 1px"></div><div class="t" style="left:661.6px;top:331px;line-height:10px;font-size:6.5px;color:#e2e2e2;font-weight:normal;transform:scaleX(0.92);transform-origin:0 0;">Square</div><div style="left:637px;top:342.8px;width:107.5px;height:17.4px;background:#6a6a6a"></div><div style="left:619.5px;top:359.90000000000003px;width:125px;height:0.6px;background:#484848"></div><div style="left:636.3px;top:342.8px;width:0.7px;height:17.4px;background:#484848"></div><svg style="position:absolute;left:624.3px;top:348.5px;" width="9" height="6" viewBox="0 0 9 6"><path d="M0.6 3 Q4.5 -1 8.4 3 Q4.5 7 0.6 3 Z" fill="#e0e0e0"/><circle cx="4.5" cy="3" r="1.3" fill="#535353"/></svg><div style="left:639.2px;top:345.6px;width:17.4px;height:11.6px;background-color:#f4f4f4;background-image:linear-gradient(45deg,#dcdcdc 25%,transparent 25%,transparent 75%,#dcdcdc 75%),linear-gradient(45deg,#dcdcdc 25%,transparent 25%,transparent 75%,#dcdcdc 75%);background-size:2px 2px;background-position:0 0,1px 1px"></div><div class="t" style="left:661.6px;top:348px;line-height:10px;font-size:6.5px;color:#e2e2e2;font-weight:normal;transform:scaleX(0.92);transform-origin:0 0;">Ellipse</div><div style="left:619.5px;top:377.3px;width:125px;height:0.6px;background:#484848"></div><div style="left:636.3px;top:360.2px;width:0.7px;height:17.4px;background:#484848"></div><svg style="position:absolute;left:624.3px;top:365.9px;" width="9" height="6" viewBox="0 0 9 6"><path d="M0.6 3 Q4.5 -1 8.4 3 Q4.5 7 0.6 3 Z" fill="#e0e0e0"/><circle cx="4.5" cy="3" r="1.3" fill="#535353"/></svg><div style="left:639.4px;top:363.2px;width:17.2px;height:12px;background:#ffffff"></div><div class="t" style="left:661.6px;top:366px;line-height:10px;font-size:6.5px;color:#e2e2e2;font-weight:normal;transform:scaleX(0.92);transform-origin:0 0;">Background</div><svg style="position:absolute;left:636.5px;top:342.5px;" width="23" height="18" viewBox="0 0 23 18"><path d="M1.5 4 V1.6 H6.5 M16 1.6 H21 V4 M21 13.5 V16.2 H16 M6.5 16.2 H1.5 V13.5" fill="none" stroke="#c4c4c4" stroke-width="0.8"/><rect x="3" y="2.6" width="17" height="12.8" fill="none" stroke="#2a2a2a" stroke-width="0.8"/><circle cx="9.7" cy="8.2" r="1.6" fill="#4fc3f7"/><rect x="13" y="8" width="7.3" height="7.2" fill="#bdbdbd" stroke="#1e1e1e" stroke-width="0.9"/><rect x="14.8" y="9.8" width="3.6" height="3.8" fill="#6a6a6a"/></svg><svg style="position:absolute;left:728.5px;top:364px;" width="7" height="8" viewBox="0 0 7 8"><path d="M1.8 3.5 V2.3 A1.7 1.7 0 0 1 5.2 2.3 V3.5" fill="none" stroke="#d0d0d0" stroke-width="0.8"/><rect x="1" y="3.5" width="5" height="4" fill="none" stroke="#d0d0d0" stroke-width="0.8"/></svg></body></html>
